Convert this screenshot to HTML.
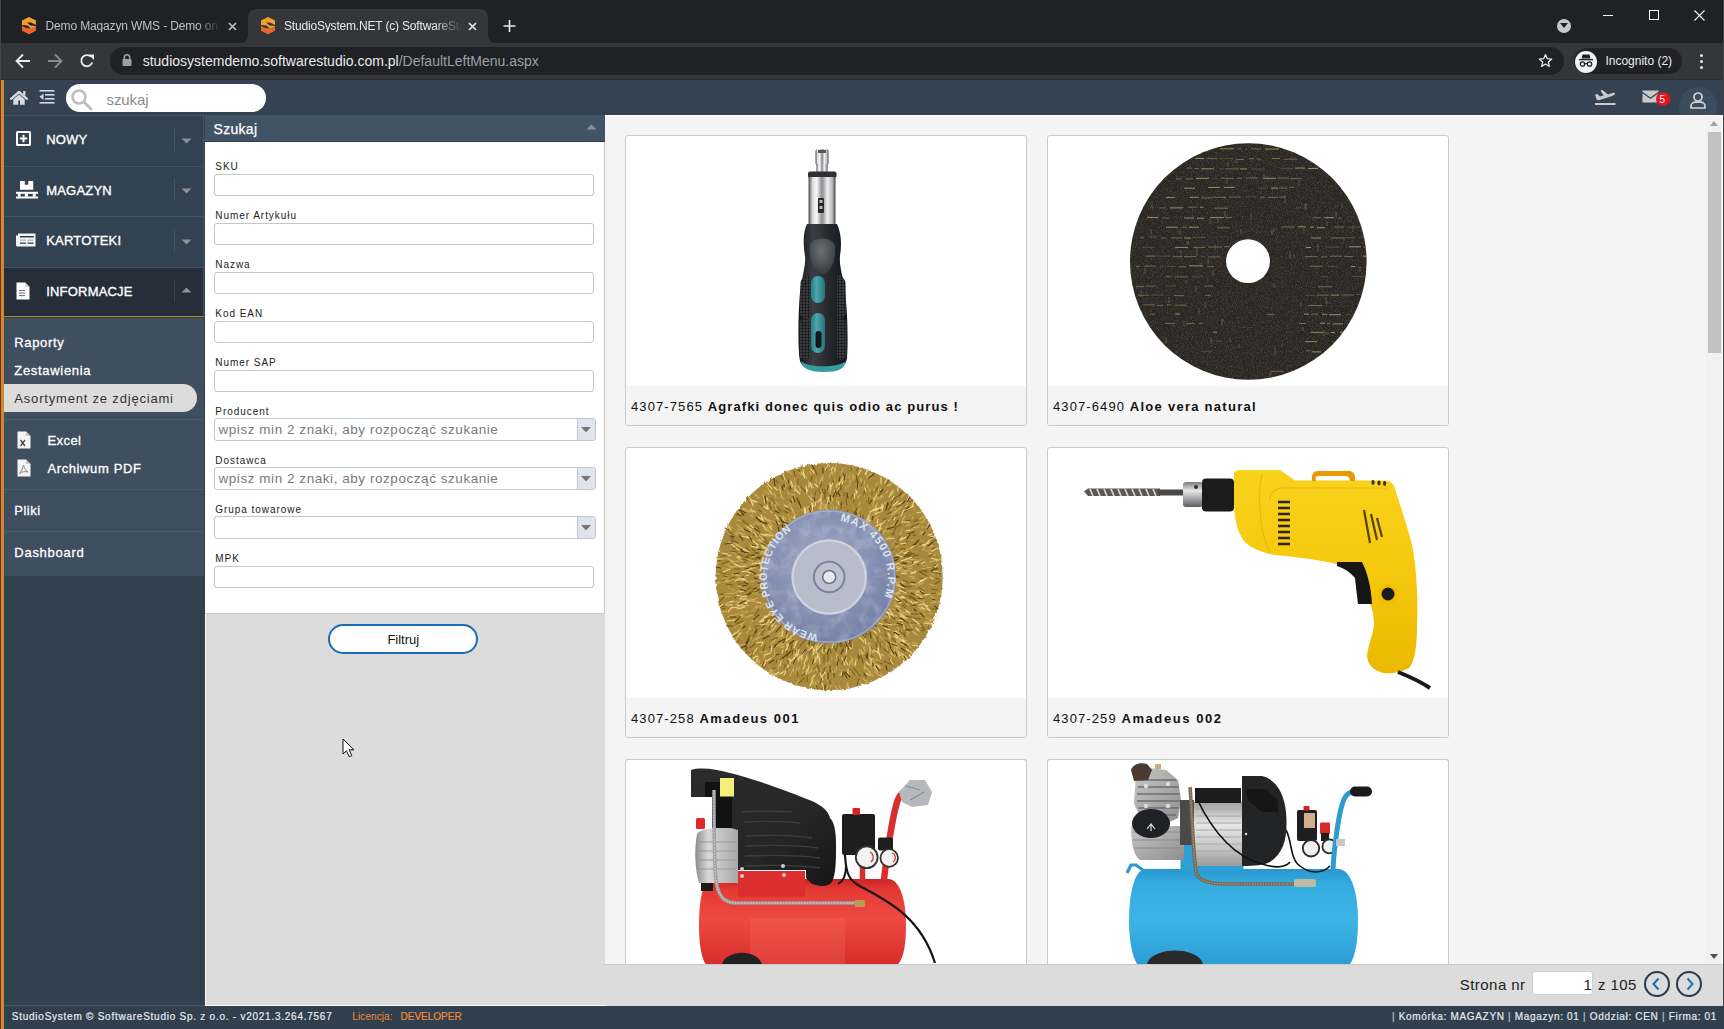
<!DOCTYPE html>
<html><head><meta charset="utf-8">
<style>
*{margin:0;padding:0;box-sizing:border-box}
html,body{width:1724px;height:1029px;overflow:hidden;background:#f3f3f3;font-family:"Liberation Sans",sans-serif}
.a{position:absolute}
.t{position:absolute;white-space:nowrap;line-height:1}
</style></head><body>
<!-- ============ CHROME TAB STRIP ============ -->
<div class="a" style="left:0;top:0;width:1724px;height:43px;background:#202124"></div>
<!-- active tab -->
<div class="a" style="left:248px;top:9px;width:240px;height:34px;background:#35363a;border-radius:8px 8px 0 0"></div>
<div class="a" style="left:240px;top:35px;width:8px;height:8px;background:#35363a"></div>
<div class="a" style="left:232px;top:27px;width:16px;height:16px;background:#202124;border-radius:0 0 8px 0"></div>
<div class="a" style="left:488px;top:35px;width:8px;height:8px;background:#35363a"></div>
<div class="a" style="left:488px;top:27px;width:16px;height:16px;background:#202124;border-radius:0 0 0 8px"></div>

<!-- favicons -->
<svg class="a" style="left:22px;top:17px" width="14" height="17" viewBox="0 0 14 17"><path d="M7 0 L14 3.5 V8 L9 5.5 H5 L8.5 8.5 L14 9 V13.5 L7 17 L0 13.5 V9 L5 11.5 H9 L5.5 8.5 L0 8 V3.5 Z" fill="#f0a030"/><path d="M0 9 L5 11.5 H9 L14 9 V13.5 L7 17 L0 13.5Z" fill="#e8642a"/></svg>
<svg class="a" style="left:261px;top:17px" width="14" height="17" viewBox="0 0 14 17"><path d="M7 0 L14 3.5 V8 L9 5.5 H5 L8.5 8.5 L14 9 V13.5 L7 17 L0 13.5 V9 L5 11.5 H9 L5.5 8.5 L0 8 V3.5 Z" fill="#f0a030"/><path d="M0 9 L5 11.5 H9 L14 9 V13.5 L7 17 L0 13.5Z" fill="#e8642a"/></svg>

<div class="t" style="left:45.5px;top:19.8px;font-size:12px;color:#bdc1c6;letter-spacing:-0.14px;width:175px;overflow:hidden;-webkit-mask-image:linear-gradient(90deg,#000 150px,transparent 175px)">Demo Magazyn WMS - Demo on</div>
<div class="t" style="left:284px;top:19.8px;font-size:12px;color:#e8eaed;letter-spacing:-0.18px;width:178px;overflow:hidden;-webkit-mask-image:linear-gradient(90deg,#000 150px,transparent 178px)">StudioSystem.NET (c) SoftwareStudio</div>
<!-- tab close x -->
<svg class="a" style="left:228px;top:22px" width="9" height="9" viewBox="0 0 9 9"><path d="M1 1L8 8M8 1L1 8" stroke="#bdc1c6" stroke-width="1.6"/></svg>
<svg class="a" style="left:467.5px;top:22px" width="9" height="9" viewBox="0 0 9 9"><path d="M1 1L8 8M8 1L1 8" stroke="#e8eaed" stroke-width="1.6"/></svg>
<!-- plus -->
<svg class="a" style="left:503px;top:20px" width="13" height="12" viewBox="0 0 13 12"><path d="M6.5 0V12M0.5 6H12.5" stroke="#e8eaed" stroke-width="1.6"/></svg>
<!-- tab search dropdown -->
<div class="a" style="left:1557px;top:19px;width:14px;height:14px;border-radius:50%;background:#c4c7cb"></div>
<svg class="a" style="left:1560px;top:23px" width="8" height="6" viewBox="0 0 8 6"><path d="M0 0H8L4 5Z" fill="#202124"/></svg>
<!-- window controls -->
<div class="a" style="left:1603px;top:15px;width:10px;height:1px;background:#fff"></div>
<div class="a" style="left:1649px;top:10px;width:10px;height:10px;border:1px solid #fff"></div>
<svg class="a" style="left:1694px;top:10px" width="11" height="11" viewBox="0 0 11 11"><path d="M0.5 0.5L10.5 10.5M10.5 0.5L0.5 10.5" stroke="#fff" stroke-width="1.1"/></svg>

<!-- ============ TOOLBAR ============ -->
<div class="a" style="left:0;top:43px;width:1724px;height:37px;background:#35363a"></div>
<div class="a" style="left:0;top:79px;width:1724px;height:1px;background:#2c2d31"></div>
<div class="a" style="left:0;top:0;width:1px;height:80px;background:#45464a"></div>
<div class="a" style="left:1723px;top:0;width:1px;height:80px;background:#45464a"></div>
<svg class="a" style="left:15px;top:53px" width="16" height="16" viewBox="0 0 16 16"><path d="M15 8H2M8 1.5L1.5 8L8 14.5" stroke="#e8eaed" stroke-width="1.8" fill="none"/></svg>
<svg class="a" style="left:47px;top:53px" width="16" height="16" viewBox="0 0 16 16"><path d="M1 8H14M8 1.5L14.5 8L8 14.5" stroke="#8a8c90" stroke-width="1.8" fill="none"/></svg>
<svg class="a" style="left:79px;top:53px" width="16" height="16" viewBox="0 0 16 16"><path d="M13.2 9.5A5.6 5.6 0 1 1 11.8 3.6" stroke="#e8eaed" stroke-width="1.8" fill="none"/><path d="M9.5 1.5H15V7Z" fill="#e8eaed"/></svg>
<!-- omnibox -->
<div class="a" style="left:110px;top:47px;width:1454px;height:28px;border-radius:14px;background:#202124"></div>
<svg class="a" style="left:122px;top:54px" width="10" height="12" viewBox="0 0 10 12"><path d="M2.3 5V3.5A2.7 2.7 0 0 1 7.7 3.5V5" stroke="#9aa0a6" stroke-width="1.5" fill="none"/><rect x="0.5" y="5" width="9" height="7" rx="1" fill="#9aa0a6"/></svg>
<div class="t" style="left:142.7px;top:54.2px;font-size:14px;color:#e8eaed">studiosystemdemo.softwarestudio.com.pl<span style="color:#9aa0a6">/DefaultLeftMenu.aspx</span></div>
<svg class="a" style="left:1538px;top:53px" width="15" height="15" viewBox="0 0 24 24"><path d="M12 2.5l2.9 6.6 7.1.6-5.4 4.7 1.6 7-6.2-3.7-6.2 3.7 1.6-7L2 9.7l7.1-.6z" stroke="#e8eaed" stroke-width="2" fill="none" stroke-linejoin="round"/></svg>
<!-- incognito -->
<div class="a" style="left:1574px;top:48px;width:108px;height:26px;border-radius:13px;background:#202124"></div>
<div class="a" style="left:1575px;top:50.5px;width:22px;height:22px;border-radius:50%;background:#f1f3f4"></div>
<svg class="a" style="left:1578px;top:53px" width="16" height="16" viewBox="0 0 16 16"><path d="M4.5 1.5h7l1 4h-9z" fill="#202124"/><rect x="1" y="6" width="14" height="1.3" fill="#202124"/><circle cx="4.5" cy="11" r="2.2" stroke="#202124" stroke-width="1.3" fill="none"/><circle cx="11.5" cy="11" r="2.2" stroke="#202124" stroke-width="1.3" fill="none"/><path d="M6.7 10.6h2.6" stroke="#202124" stroke-width="1.2"/></svg>
<div class="t" style="left:1605.4px;top:55px;font-size:12px;color:#e8eaed">Incognito (2)</div>
<div class="a" style="left:1700px;top:54px;width:3px;height:3px;border-radius:50%;background:#e8eaed"></div>
<div class="a" style="left:1700px;top:60px;width:3px;height:3px;border-radius:50%;background:#e8eaed"></div>
<div class="a" style="left:1700px;top:66px;width:3px;height:3px;border-radius:50%;background:#e8eaed"></div>

<!-- ============ APP HEADER ============ -->
<div class="a" style="left:0;top:80px;width:1724px;height:35px;background:#344251"></div>

<!-- ============ SIDEBAR ============ -->
<div class="a" style="left:0;top:115px;width:205px;height:891px;background:#33404d"></div>


<!-- header icons -->
<svg class="a" style="left:10px;top:89.5px" width="19" height="16" viewBox="0 0 19 16"><path d="M1 8.8L9 2 17 8.8" stroke="#d8dade" stroke-width="2.3" fill="none" stroke-linecap="round" stroke-linejoin="round"/><rect x="13.2" y="1" width="2.2" height="4.5" fill="#d8dade"/><path d="M3.3 9.2L9 4.4 14.7 9.2V14.7H10V10.4H8.2V14.7H3.3Z" fill="#d8dade"/></svg>
<svg class="a" style="left:39px;top:89px" width="16" height="15" viewBox="0 0 16 15"><rect x="0.5" y="1" width="15" height="1.6" fill="#d6d8dc"/><rect x="6" y="5" width="9.5" height="1.6" fill="#d6d8dc"/><rect x="6" y="9" width="9.5" height="1.6" fill="#d6d8dc"/><rect x="0.5" y="13" width="15" height="1.6" fill="#d6d8dc"/><path d="M0.5 7.8L4.5 4.5V11Z" fill="#d6d8dc"/></svg>
<div class="a" style="left:66px;top:84px;width:200px;height:28px;border-radius:14px;background:#fff"></div>
<svg class="a" style="left:70px;top:88px" width="23" height="23" viewBox="0 0 23 23"><circle cx="9" cy="9" r="6.5" stroke="#bdbdbd" stroke-width="2.6" fill="none"/><path d="M13.8 13.8L21 21" stroke="#bdbdbd" stroke-width="3" stroke-linecap="round"/></svg>
<div class="t" style="left:106.5px;top:91.5px;font-size:15px;color:#8a8a8a;letter-spacing:-0.1px">szukaj</div>
<!-- plane -->
<svg class="a" style="left:1594px;top:89px" width="22" height="17" viewBox="0 0 22 17"><path d="M1 5.5L3.5 5 6 7.5 9.5 6.5 6.5 1.5 8.5 1 14 5.5 18.5 4C20.5 3.5 21.5 4 21 5S19 6.8 17.5 7.3L5.5 11C4 11.4 3 11 2.5 10.2Z" fill="#c8cacd"/><rect x="1" y="14" width="20.5" height="2" fill="#c8cacd"/></svg>
<!-- mail -->
<svg class="a" style="left:1642px;top:90px" width="17" height="13" viewBox="0 0 17 13"><path d="M0.5 0.5H16.5V1.8L8.5 7.5 0.5 1.8Z" fill="#c8cacd"/><path d="M0.5 3.2L8.5 9 16.5 3.2V12.5H0.5Z" fill="#c8cacd"/></svg>
<div class="a" style="left:1656px;top:92px;width:14px;height:14px;border-radius:50%;background:#e8141c"></div>
<div class="t" style="left:1659.5px;top:94.5px;font-size:10px;color:#fff">5</div>
<!-- user -->
<div class="a" style="left:1679px;top:87px;width:38px;height:38px;border-radius:50%;background:#3d4c5c;clip-path:inset(0 0 10px 0)"></div>
<svg class="a" style="left:1690px;top:92px" width="16" height="17" viewBox="0 0 16 17"><circle cx="8" cy="5" r="4" stroke="#d0d2d5" stroke-width="1.7" fill="none"/><path d="M1 16V14.2C1 11.8 3 10.2 5.5 10.2H10.5C13 10.2 15 11.8 15 14.2V16Z" stroke="#d0d2d5" stroke-width="1.7" fill="none" stroke-linejoin="round"/></svg>
<div class="a" style="left:1723px;top:80px;width:1px;height:949px;background:#3c3f44"></div>

<!-- ============ SIDEBAR items ============ -->
<div class="a" style="left:4px;top:115px;width:200px;height:202px;background:#334250"></div>
<div class="a" style="left:4px;top:115px;width:200px;height:1px;background:#445361"></div>
<div class="a" style="left:4px;top:166px;width:200px;height:1px;background:#445361"></div>
<div class="a" style="left:4px;top:216px;width:200px;height:1px;background:#445361"></div>
<div class="a" style="left:4px;top:267px;width:200px;height:1px;background:#445361"></div>
<div class="a" style="left:203px;top:115px;width:1px;height:202px;background:#445361"></div>
<div class="a" style="left:4px;top:268px;width:199px;height:48px;background:#262f39"></div>
<div class="a" style="left:4px;top:316px;width:200px;height:1px;background:#c8802c"></div>
<!-- dividers + triangles -->
<div class="a" style="left:174px;top:128px;width:1px;height:23px;background:#465563"></div>
<div class="a" style="left:174px;top:178px;width:1px;height:23px;background:#465563"></div>
<div class="a" style="left:174px;top:229px;width:1px;height:23px;background:#465563"></div>
<div class="a" style="left:174px;top:279px;width:1px;height:23px;background:#3a4450"></div>
<svg class="a" style="left:181px;top:138px" width="11" height="6" viewBox="0 0 11 6"><path d="M0.5 0.5H10.5L5.5 5.5Z" fill="#8e9092"/></svg>
<svg class="a" style="left:181px;top:188px" width="11" height="6" viewBox="0 0 11 6"><path d="M0.5 0.5H10.5L5.5 5.5Z" fill="#8e9092"/></svg>
<svg class="a" style="left:181px;top:239px" width="11" height="6" viewBox="0 0 11 6"><path d="M0.5 0.5H10.5L5.5 5.5Z" fill="#8e9092"/></svg>
<svg class="a" style="left:181px;top:287px" width="11" height="6" viewBox="0 0 11 6"><path d="M0.5 5.5H10.5L5.5 0.5Z" fill="#8e9092"/></svg>
<!-- icons -->
<svg class="a" style="left:16px;top:131px" width="15" height="15" viewBox="0 0 15 15"><rect x="1" y="1" width="13" height="13" stroke="#fff" stroke-width="2" fill="none" rx="0.5"/><path d="M7.5 3.8V11.2M3.8 7.5H11.2" stroke="#fff" stroke-width="2"/></svg>
<svg class="a" style="left:16px;top:180px" width="22" height="19" viewBox="0 0 22 19"><path d="M4 1H8.8V4.7H12.3V1H17.2V9.8H4Z" fill="#fff"/><rect x="0" y="11.8" width="22" height="2" fill="#fff"/><rect x="0" y="16.5" width="22" height="2" fill="#fff"/><rect x="1.8" y="13.5" width="2.8" height="3.2" fill="#fff"/><rect x="8.8" y="13.5" width="3.2" height="3.2" fill="#fff"/><rect x="16.8" y="13.5" width="2.9" height="3.2" fill="#fff"/></svg>
<svg class="a" style="left:16px;top:233px" width="20" height="14" viewBox="0 0 20 14"><path d="M1 0.5H19.5V13.5H1.5C0.7 13.5 0 12.8 0 12V2.5H2V0.5Z" fill="#f4f4f4"/><rect x="4" y="3" width="14" height="1.5" fill="#334250"/><rect x="4" y="6.5" width="6" height="1.3" fill="#b0b4b8"/><rect x="11.5" y="6.5" width="6" height="1.3" fill="#b0b4b8"/><rect x="4" y="9.5" width="6" height="1.3" fill="#334250"/><rect x="11.5" y="9.5" width="6" height="1.3" fill="#334250"/></svg>
<svg class="a" style="left:16px;top:282px" width="14" height="18" viewBox="0 0 14 18"><path d="M0.5 0.5H9L13.5 5V17.5H0.5Z" fill="#fff"/><path d="M9 0.5V5H13.5" fill="#d8d8d8"/><rect x="3" y="8" width="6" height="1.1" fill="#777"/><rect x="3" y="10.5" width="6" height="1.1" fill="#777"/><rect x="3" y="13" width="6" height="1.1" fill="#777"/></svg>
<div class="t" style="left:46.2px;top:133.0px;font-size:13px;color:#fff;letter-spacing:0.2px;-webkit-text-stroke:0.35px #fff">NOWY</div>
<div class="t" style="left:46.2px;top:183.5px;font-size:13px;color:#fff;letter-spacing:0.2px;-webkit-text-stroke:0.35px #fff">MAGAZYN</div>
<div class="t" style="left:46.2px;top:234.0px;font-size:13px;color:#fff;letter-spacing:0.2px;-webkit-text-stroke:0.35px #fff">KARTOTEKI</div>
<div class="t" style="left:46.2px;top:285.0px;font-size:13px;color:#fff;letter-spacing:0.2px;-webkit-text-stroke:0.35px #fff">INFORMACJE</div>
<!-- submenu -->
<div class="a" style="left:4px;top:317.5px;width:200px;height:258px;background:#3f4f60"></div>
<div class="a" style="left:4px;top:384px;width:193px;height:28px;background:#dcdcdc;border-radius:0 14px 14px 0"></div>
<div class="a" style="left:4px;top:419px;width:200px;height:1px;background:#4d5c6c"></div>
<div class="a" style="left:4px;top:489px;width:200px;height:1px;background:#4d5c6c"></div>
<div class="a" style="left:4px;top:531px;width:200px;height:1px;background:#4d5c6c"></div>
<div class="t" style="left:14.3px;top:336px;font-size:13px;color:#fff;letter-spacing:0.65px;-webkit-text-stroke:0.3px #fff">Raporty</div>
<div class="t" style="left:14.3px;top:364px;font-size:13px;color:#fff;letter-spacing:0.69px;-webkit-text-stroke:0.3px #fff">Zestawienia</div>
<div class="t" style="left:14.3px;top:392px;font-size:13px;color:#333;letter-spacing:0.81px">Asortyment ze zdjęciami</div>
<div class="t" style="left:47.4px;top:434px;font-size:13px;color:#fff;letter-spacing:0.45px;-webkit-text-stroke:0.3px #fff">Excel</div>
<div class="t" style="left:47.4px;top:462.2px;font-size:13px;color:#fff;letter-spacing:0.62px;-webkit-text-stroke:0.3px #fff">Archiwum PDF</div>
<div class="t" style="left:14.3px;top:504px;font-size:13px;color:#fff;letter-spacing:0.5px;-webkit-text-stroke:0.3px #fff">Pliki</div>
<div class="t" style="left:14.3px;top:546.1px;font-size:13px;color:#fff;letter-spacing:0.73px;-webkit-text-stroke:0.3px #fff">Dashboard</div>
<svg class="a" style="left:17px;top:431px" width="14" height="18" viewBox="0 0 14 18"><path d="M0.5 0.5H9L13.5 5V17.5H0.5Z" fill="#f4f4f4"/><path d="M9 0.5V5H13.5Z" fill="#c8c8c8"/><path d="M3.5 9L8 15M8 9L3.5 15" stroke="#444" stroke-width="1.3"/></svg>
<svg class="a" style="left:17px;top:459px" width="14" height="18" viewBox="0 0 14 18"><path d="M0.5 0.5H9L13.5 5V17.5H0.5Z" fill="#f4f4f4"/><path d="M9 0.5V5H13.5Z" fill="#c8c8c8"/><path d="M6.5 6C5.5 9 4.5 12 2.5 14.5M6.5 6C7.5 9.5 9 12 11 13M2.5 14.5C5 12.5 8 12.2 11 13" stroke="#888" stroke-width="1" fill="none"/></svg>
<div class="a" style="left:4px;top:1005px;width:201px;height:1px;background:#4a5866"></div>


<!-- ============ PANEL ============ -->
<div class="a" style="left:205px;top:115px;width:400px;height:891px;background:#dcdcdc;border-left:1px solid #fff;border-bottom:1px solid #fff"></div>
<div class="a" style="left:205px;top:115px;width:400px;height:27px;background:#435366;border-bottom:1px solid #2f3c4a"></div>
<div class="t" style="left:213.5px;top:121.5px;font-size:14px;color:#fff;letter-spacing:0.3px;-webkit-text-stroke:0.25px #fff">Szukaj</div>
<svg class="a" style="left:586px;top:124px" width="11" height="6" viewBox="0 0 11 6"><path d="M0.5 5.5H10.5L5.5 0.5Z" fill="#8e9092"/></svg>
<div class="a" style="left:205px;top:142px;width:400px;height:472px;background:#fff;border-right:1px solid #c8c8c8;border-bottom:1px solid #c8c8c8"></div>
<div class="t" style="left:215.3px;top:162.0px;font-size:10px;color:#222;letter-spacing:0.95px">SKU</div>
<div class="a" style="left:214px;top:173.5px;width:380px;height:22px;border:1px solid #c3c6cb;border-radius:3px;background:#fff"></div>
<div class="t" style="left:215.3px;top:211.0px;font-size:10px;color:#222;letter-spacing:0.95px">Numer Artykułu</div>
<div class="a" style="left:214px;top:222.5px;width:380px;height:22px;border:1px solid #c3c6cb;border-radius:3px;background:#fff"></div>
<div class="t" style="left:215.3px;top:260.0px;font-size:10px;color:#222;letter-spacing:0.95px">Nazwa</div>
<div class="a" style="left:214px;top:271.5px;width:380px;height:22px;border:1px solid #c3c6cb;border-radius:3px;background:#fff"></div>
<div class="t" style="left:215.3px;top:309.0px;font-size:10px;color:#222;letter-spacing:0.95px">Kod EAN</div>
<div class="a" style="left:214px;top:320.5px;width:380px;height:22px;border:1px solid #c3c6cb;border-radius:3px;background:#fff"></div>
<div class="t" style="left:215.3px;top:358.0px;font-size:10px;color:#222;letter-spacing:0.95px">Numer SAP</div>
<div class="a" style="left:214px;top:369.5px;width:380px;height:22px;border:1px solid #c3c6cb;border-radius:3px;background:#fff"></div>
<div class="t" style="left:215.3px;top:407.0px;font-size:10px;color:#222;letter-spacing:0.95px">Producent</div>
<div class="a" style="left:214px;top:418.0px;width:382px;height:23px;border:1px solid #c3c6cb;border-radius:3px;background:#fff;overflow:hidden"><div class="a" style="right:0;top:0;width:18px;height:21px;background:#dfe5ef;border-left:1px solid #c3c6cb"></div><svg class="a" style="right:4px;top:8px" width="10" height="6" viewBox="0 0 10 6"><path d="M0 0H10L5 5.5Z" fill="#777"/></svg></div>
<div class="t" style="left:218.5px;top:422.9px;font-size:13.5px;color:#7a7a7a;letter-spacing:0.55px">wpisz min 2 znaki, aby rozpocząć szukanie</div>
<div class="t" style="left:215.3px;top:456.0px;font-size:10px;color:#222;letter-spacing:0.95px">Dostawca</div>
<div class="a" style="left:214px;top:467.0px;width:382px;height:23px;border:1px solid #c3c6cb;border-radius:3px;background:#fff;overflow:hidden"><div class="a" style="right:0;top:0;width:18px;height:21px;background:#dfe5ef;border-left:1px solid #c3c6cb"></div><svg class="a" style="right:4px;top:8px" width="10" height="6" viewBox="0 0 10 6"><path d="M0 0H10L5 5.5Z" fill="#777"/></svg></div>
<div class="t" style="left:218.5px;top:471.9px;font-size:13.5px;color:#7a7a7a;letter-spacing:0.55px">wpisz min 2 znaki, aby rozpocząć szukanie</div>
<div class="t" style="left:215.3px;top:505.0px;font-size:10px;color:#222;letter-spacing:0.95px">Grupa towarowe</div>
<div class="a" style="left:214px;top:516.0px;width:382px;height:23px;border:1px solid #c3c6cb;border-radius:3px;background:#fff;overflow:hidden"><div class="a" style="right:0;top:0;width:18px;height:21px;background:#dfe5ef;border-left:1px solid #c3c6cb"></div><svg class="a" style="right:4px;top:8px" width="10" height="6" viewBox="0 0 10 6"><path d="M0 0H10L5 5.5Z" fill="#777"/></svg></div>
<div class="t" style="left:215.3px;top:554.0px;font-size:10px;color:#222;letter-spacing:0.95px">MPK</div>
<div class="a" style="left:214px;top:565.5px;width:380px;height:22px;border:1px solid #c3c6cb;border-radius:3px;background:#fff"></div>

<div class="a" style="left:328px;top:624px;width:150px;height:30px;border:2px solid #1a6db4;border-radius:15px;background:#fff"></div>
<div class="t" style="left:387.4px;top:633px;font-size:13px;color:#111">Filtruj</div>
<svg class="a" style="left:342px;top:738px" width="14" height="20" viewBox="0 0 14 20"><path d="M1 1V16L4.5 12.8 7.3 18.8 9.8 17.6 7.1 11.8H12Z" fill="#fff" stroke="#111" stroke-width="1" stroke-linejoin="round"/></svg>

<!-- ============ CONTENT AREA ============ -->
<div class="a" style="left:605px;top:115px;width:1118px;height:849px;background:#f4f4f4;border-top:1px solid #fff"></div>
<div class="a" style="left:1705px;top:116px;width:17px;height:848px;background:#f1f1f1"></div>
<div class="a" style="left:1708px;top:132px;width:13px;height:221px;background:#c1c1c1"></div>
<svg class="a" style="left:1710px;top:121px" width="8" height="5" viewBox="0 0 8 5"><path d="M0 5H8L4 0Z" fill="#a3a3a3"/></svg>
<svg class="a" style="left:1710px;top:954px" width="8" height="5" viewBox="0 0 8 5"><path d="M0 0H8L4 5Z" fill="#505050"/></svg>
<div class="a" style="left:1722px;top:115px;width:1px;height:849px;background:#fff"></div>

<!-- cards -->
<div class="a" style="left:625px;top:135px;width:402px;height:291px;background:#fff;border:1px solid #c9c9c9;border-radius:3px;overflow:hidden"><div class="a" style="left:0;top:250px;width:400px;height:40px;background:#f4f4f4"></div></div>
<svg class="a" style="left:625px;top:135px" width="402" height="291" viewBox="625 135 402 291">
<defs>
<linearGradient id="chr" x1="0" x2="1"><stop offset="0" stop-color="#4a4c50"/><stop offset="0.15" stop-color="#d8d8da"/><stop offset="0.3" stop-color="#fafafa"/><stop offset="0.5" stop-color="#8a8c90"/><stop offset="0.7" stop-color="#f0f0f0"/><stop offset="0.88" stop-color="#b8babc"/><stop offset="1" stop-color="#404246"/></linearGradient>
<linearGradient id="hdl" x1="0" x2="1"><stop offset="0" stop-color="#141618"/><stop offset="0.3" stop-color="#3a3e42"/><stop offset="0.55" stop-color="#2a2d30"/><stop offset="1" stop-color="#111315"/></linearGradient>
<radialGradient id="dome" cx="0.45" cy="0.35" r="0.6"><stop offset="0" stop-color="#6a7074"/><stop offset="1" stop-color="#3c4044"/></radialGradient>
<pattern id="dots" width="3" height="3" patternUnits="userSpaceOnUse"><rect width="3" height="3" fill="#3a3d40"/><circle cx="1.5" cy="1.5" r="1" fill="#0a0b0c"/></pattern>
<linearGradient id="teal" x1="0" x2="1"><stop offset="0" stop-color="#2c7c84"/><stop offset="0.4" stop-color="#4aa8b0"/><stop offset="1" stop-color="#2a7078"/></linearGradient>
</defs>
<rect x="815.5" y="149" width="13" height="16" rx="2" fill="url(#chr)"/>
<rect x="818" y="150" width="8" height="3" fill="#555"/>
<rect x="816.5" y="164" width="11" height="9" fill="url(#chr)"/>
<rect x="808" y="171.5" width="28.5" height="6.5" rx="2" fill="#2e3033"/>
<rect x="808.5" y="177" width="27" height="48" fill="url(#chr)"/>
<rect x="818" y="198" width="6" height="15" rx="1" fill="#2a2a2a"/>
<rect x="819.5" y="200" width="3" height="3" fill="#bbb"/><rect x="819.5" y="206" width="3" height="3" fill="#bbb"/>
<path d="M807 224 H837 C841 232 842 244 840 256 C839 266 843 276 845 292 C848 315 848 345 847 358 C846 367 838 371 823 371 C808 371 800 367 799.5 358 C798 345 798 315 800 292 C802 276 806 266 805 256 C803 244 803 232 807 224Z" fill="url(#hdl)"/>
<path d="M810 246 C810 236 834 236 835 246 C836 260 832 272 822.5 274 C813 272 809 260 810 246Z" fill="url(#dome)"/>
<path d="M800.5 282 C803 276 806 274 809 276 V318 C806 320 802 318 800 314Z" fill="url(#dots)"/>
<path d="M845.5 282 C843 276 840 274 837 276 V318 C840 320 844 318 846 314Z" fill="url(#dots)"/>
<path d="M799.5 322 C802 318 806 318 809 320 V358 C806 361 801 360 799.5 356Z" fill="url(#dots)"/>
<path d="M846.5 322 C844 318 840 318 837 320 V358 C840 361 845 360 846.5 356Z" fill="url(#dots)"/>
<rect x="811" y="276" width="14" height="27" rx="7" fill="url(#teal)"/>
<rect x="811" y="313" width="14" height="40" rx="7" fill="url(#teal)"/>
<rect x="815.5" y="331" width="6" height="17" rx="3" fill="#15171a"/>
<path d="M801 361 C808 368 838 368 846 361 C845 369 838 372 823 372 C809 372 802 368 801 361Z" fill="#3a9aa2"/>
</svg>
<div class="t" style="left:631px;top:399.8px;font-size:13px;color:#111;letter-spacing:1.1px">4307-7565 <b style="letter-spacing:1.1px">Agrafki donec quis odio ac purus !</b></div>
<div class="a" style="left:1047px;top:135px;width:402px;height:291px;background:#fff;border:1px solid #c9c9c9;border-radius:3px;overflow:hidden"><div class="a" style="left:0;top:250px;width:400px;height:40px;background:#f4f4f4"></div></div>
<svg class="a" style="left:1047px;top:135px" width="402" height="291" viewBox="1047 135 402 291">
<defs>
<filter id="grain" x="0" y="0" width="100%" height="100%"><feTurbulence type="fractalNoise" baseFrequency="1.2" numOctaves="1" seed="4" result="t"/><feColorMatrix in="t" type="matrix" values="0 0 0 0 0.45  0 0 0 0 0.42  0 0 0 0 0.38  0 0 0 1.6 -0.75"/><feComposite in2="SourceGraphic" operator="in"/></filter>
<clipPath id="dc"><circle cx="1248.3" cy="261.5" r="118.3"/></clipPath>
</defs>
<circle cx="1248.3" cy="261.5" r="118.3" fill="#2a2723"/>
<g clip-path="url(#dc)">
<circle cx="1248.3" cy="261.5" r="118.3" fill="#fff" filter="url(#grain)" opacity="0.5"/>
<path d="M1238 148.9h3M1251 148.9h10M1207 158.7h10M1237 159.5h7M1249 158.7h5M1257 159.1h4M1272 158.5h8M1284 159.2h13M1187 168.1h5M1194 168.5h5M1225 168.9h14M1176 179.0h5M1186 178.9h7M1221 178.3h13M1237 178.3h5M1246 178.0h12M1277 178.0h12M1290 178.7h12M1279 188.1h8M1289 187.3h5M1201 197.9h11M1213 197.3h13M1229 197.0h12M1260 197.2h5M1268 197.4h10M1279 197.2h6M1159 207.9h7M1188 207.2h9M1214 208.2h14M1162 218.1h7M1225 217.4h7M1313 217.7h8M1338 218.2h3M1182 227.2h5M1217 227.8h13M1281 227.0h13M1334 227.0h10M1140 237.7h4M1161 237.9h5M1171 237.9h11M1331 237.9h13M1193 247.4h12M1208 247.0h14M1224 246.7h6M1363 247.1h14M1146 256.1h10M1173 256.7h9M1184 256.6h12M1208 256.9h12M1305 256.6h12M1321 256.9h6M1330 256.2h12M1344 256.6h9M1136 266.4h4M1144 266.1h12M1179 266.8h7M1207 266.4h7M1310 266.2h13M1165 276.3h5M1174 276.9h14M1136 286.6h8M1147 286.0h9M1204 286.1h9M1318 286.8h14M1138 295.2h11M1174 295.6h10M1205 295.3h6M1317 295.1h12M1341 295.0h13M1143 304.8h12M1157 305.4h6M1167 304.9h4M1175 305.2h11M1308 305.5h14M1150 314.2h5M1267 314.4h7M1311 314.1h7M1165 323.4h10M1186 323.4h9M1199 323.6h4M1299 323.5h7M1327 323.5h3M1306 350.8h4M1271 371.3h13" stroke="#8c6e4a" stroke-width="0.85" fill="none"/>
<path d="M1220 148.8h14M1265 149.0h14M1195 158.5h9M1201 168.8h13M1240 168.9h7M1295 168.1h10M1308 168.5h10M1196 178.3h13M1263 178.3h13M1184 188.2h11M1208 187.4h12M1224 187.4h11M1271 188.1h7M1166 197.4h9M1190 197.3h9M1170 207.9h13M1200 207.2h3M1147 217.4h11M1184 218.0h10M1197 218.2h7M1210 217.6h14M1324 217.7h10M1166 227.2h12M1189 227.2h10M1298 226.8h8M1310 227.1h4M1317 227.7h8M1184 238.1h7M1311 238.0h10M1175 247.4h13M1306 247.5h5M1349 246.8h12M1363 256.2h7M1189 265.9h14M1351 266.6h4M1331 295.1h8M1175 314.1h5M1304 314.1h5M1322 314.3h5M1329 314.7h12M1320 323.2h5M1333 323.9h10M1213 332.2h4M1311 332.3h12M1331 332.5h4M1340 332.2h13M1305 341.6h12M1312 351.9h9" stroke="#b8966a" stroke-width="0.85" fill="none"/>
<path d="M1245 149.2h3M1219 158.6h14M1219 168.9h5M1252 169.1h13M1280 168.7h13M1214 178.8h4M1258 188.2h9M1246 196.8h10M1150 207.2h4M1296 208.0h5M1348 227.1h12M1149 237.1h8M1193 237.4h13M1345 237.7h10M1358 237.8h11M1143 247.3h11M1326 247.1h13M1157 256.1h13M1201 256.5h4M1160 266.4h4M1167 266.4h9M1328 266.3h9M1192 276.1h11M1321 276.7h7M1352 276.4h13M1166 286.0h10M1151 295.1h12M1305 295.3h10M1356 294.5h8M1346 314.7h5M1325 333.2h5M1216 341.1h5M1332 341.7h13M1201 351.3h11" stroke="#64503a" stroke-width="0.85" fill="none"/>
<path d="M1210 218v6M1196 286v6M1294 254v4M1274 228v4M1304 228v5M1227 178v6M1230 337v5M1353 225v7M1186 280v4M1336 211v7M1290 251v8M1222 319v6M1236 158v5M1197 248v8M1199 308v6M1188 241v4M1342 203v5M1211 337v7M1151 229v5M1301 302v5M1241 229v5M1205 302v6M1326 297v7M1285 195v8M1180 231v4M1223 319v3M1169 297v6M1306 203v7M1303 327v4M1213 270v6M1201 263v4M1264 174v3M1251 213v7M1188 241v3M1181 250v6M1239 344v4M1360 267v5M1275 348v8M1166 337v7M1299 180v6M1282 344v3M1228 162v4M1208 259v6M1344 237v4M1305 204v5M1215 245v5M1145 268v6M1225 196v3M1218 218v5M1184 321v5M1270 371v5M1272 230v5M1274 283v5M1152 203v4M1318 244v7M1225 211v6M1327 221v5M1324 330v6M1141 291v6" stroke="#8a6c48" stroke-width="0.9" fill="none" opacity="0.7"/>

</g>
<circle cx="1248" cy="261.2" r="21.9" fill="#fff"/>
</svg>
<div class="t" style="left:1053px;top:399.8px;font-size:13px;color:#111;letter-spacing:1.1px">4307-6490 <b style="letter-spacing:1.27px">Aloe vera natural</b></div>
<div class="a" style="left:625px;top:447px;width:402px;height:291px;background:#fff;border:1px solid #c9c9c9;border-radius:3px;overflow:hidden"><div class="a" style="left:0;top:250px;width:400px;height:40px;background:#f4f4f4"></div></div>
<svg class="a" style="left:625px;top:447px" width="402" height="291" viewBox="625 447 402 291">
<defs>
<radialGradient id="stl" cx="0.45" cy="0.4" r="0.6"><stop offset="0" stop-color="#a0a8c4"/><stop offset="1" stop-color="#7480a6"/></radialGradient>
<filter id="wire" x="-5%" y="-5%" width="110%" height="110%"><feTurbulence type="fractalNoise" baseFrequency="0.3" numOctaves="2" seed="7" result="n"/><feDisplacementMap in="SourceGraphic" in2="n" scale="3"/></filter>
</defs>
<circle cx="829.2" cy="576.6" r="113.5" fill="#a8893e" filter="url(#wire)"/>
<path d="M830 495l-0 -5M784 499l-3 -2M734 580l-5 -1M908 567l6 -3M934 561l5 -1M831 508l2 -4M801 491l-3 -5M844 648l0 6M901 630l1 3M876 528l2 -6M743 529l-7 1M859 472l1 -5M751 564l-6 -1M846 499l2 -4M754 566l-7 2M764 560l-7 0M780 622l-3 7M890 652l7 4M781 627l-4 1M861 650l2 3M723 559l-3 1M793 669l-3 7M740 600l-7 2M897 599l3 2M759 592l-3 1M747 555l-3 -3M906 569l4 1M768 541l-7 -2M748 569l-3 -0M921 568l4 1M844 482l-0 -6M865 663l-1 6M827 501l0 -4M918 547l5 -2M829 665l-0 8M836 510l1 -4M930 547l2 -2M896 584l5 0M928 547l5 -1M746 572l-4 -2M754 599l-6 2M776 498l-2 -5M815 666l-1 6M773 629l-4 3M898 546l2 -3M903 571l4 0M842 673l-0 3M877 502l1 -6M763 664l-4 2M881 615l6 2M781 493l-2 -4M755 546l-5 -0M825 641l-1 4M907 644l4 4M742 561l-6 -4M909 502l4 -2M831 685l0 5M900 583l5 1M785 529l-2 -3M833 510l1 -3M795 639l-5 3M742 576l-7 -1M865 667l-0 3M836 480l1 -3M896 593l4 -1M764 587l-5 3M801 475l-2 -3M829 477l3 -6M897 650l2 3M905 570l5 1M872 517l2 -5M811 475l-2 -7M744 535l-8 1M879 513l3 -2M893 643l6 4M772 513l-2 -2M759 525l-6 -1M755 517l-4 -7M908 600l3 2M807 654l0 7M777 536l-7 -3M925 624l6 4M886 645l2 8M875 509l2 -6M882 624l2 6M757 589l-4 1M821 512l1 -6M914 585l6 -1M890 510l3 -2M765 553l-3 -1M777 509l-3 -6M738 534l-7 0M741 596l-4 -1M886 493l2 -2M825 672l1 3M777 625l-7 1M833 475l-2 -7M870 629l4 3M903 617l5 6M873 507l0 -4M836 502l3 -6M859 649l1 7M753 601l-5 -0M881 673l1 4M802 656l-4 6M912 514l2 -5M897 609l6 2M758 546l-3 -2M748 581l-4 2M809 643l-1 3M888 521l4 -3M753 653l-3 2M819 643l-3 6M910 541l3 -1M772 505l-0 -5M732 593l-7 1M736 562l-4 -1M916 621l5 5M879 617l5 2M781 640l-3 2M927 551l8 -2M769 624l-3 6M771 669l-2 3M825 650l-1 4M827 678l-0 3M745 579l-3 -1M830 467l-2 -4M917 605l4 5M762 523l-2 -3M880 636l2 3M922 611l3 4M913 551l4 -1M754 541l-3 -1M749 510l-6 -2M878 500l4 -5M878 525l2 -2M891 526l6 -4M739 545l-5 -2M889 636l2 7M893 615l4 1M805 496l-2 -7M749 571l-3 -2M812 507l2 -5M923 546l3 1M925 610l4 -1M726 580l-3 1M885 504l6 -5M774 672l-2 4M910 624l4 -0M736 554l-6 -4M842 509l1 -4M896 643l4 6M750 564l-4 -2M742 587l-4 -1M881 654l3 2M934 593l8 -0M820 483l1 -3M858 489l-0 -6M758 552l-3 -2M761 519l-5 -4M797 667l-1 7M817 640l2 7M917 541l7 0M806 668l0 4M814 488l-4 -6M742 548l-7 -4M775 649l-1 4M872 514l6 -5M821 506l-1 -5M880 499l3 -3M768 521l-6 -5M733 579l-6 3M864 647l3 3M916 591l7 -2M820 510l-1 -4M848 491l0 -6M873 659l1 5M810 643l-2 7M846 490l0 -4M852 660l1 5M751 637l-2 2M868 642l3 2M856 672l2 2M764 500l-1 -6M876 659l4 3M766 651l-3 5M852 481l4 -6M813 660l-2 4M748 528l-3 -3M820 669l1 3M934 593l4 2M769 509l-4 -2M926 610l5 -0M906 614l8 1M766 513l-4 -2M779 637l-1 3M793 666l1 6M769 521l-5 -4M913 510l3 -0M923 550l3 -3M824 667l2 4M892 602l4 5M899 600l5 3M895 619l5 2M854 671l3 4M763 539l-4 -4M757 598l-4 2M771 546l-4 -1M878 494l1 -7M894 584l5 0M788 633l-2 7M876 668l2 3M937 561l5 -3M835 686l3 4M926 551l7 -0M938 578l5 -0M738 637l-4 1M824 509l-0 -5M773 669l-3 6M819 649l1 6M917 544l5 -3M908 591l8 0M781 491l-2 -4M735 619l-2 2M735 564l-6 -4M728 581l-3 1M874 492l0 -4M820 680l-4 5M809 484l-1 -3M786 519l-4 -3M921 527l3 0M881 621l3 4M901 655l3 4M780 673l-4 3M839 686l3 4M824 492l2 -4M835 482l-1 -4M824 497l-3 -7M890 554l4 -3M804 650l-4 7M774 641l-3 3M901 614l2 2M894 532l4 -2M816 500l-5 -6M873 489l5 -6M873 635l3 6M758 563l-7 -2M765 552l-3 -3M738 619l-4 2M782 635l-3 5M894 646l1 7M781 642l-4 5M797 486l-5 -6M895 548l3 -2M856 672l1 3M841 480l2 -5M723 597l-5 -2M869 664l3 5M921 518l4 -2M838 661l1 5M744 556l-6 -0M913 602l4 0M757 513l-6 -5M895 593l4 -1M865 488l0 -7M875 506l2 -2M814 682l-2 3M877 645l2 3M759 660l-3 4M824 645l2 6M890 653l5 4M815 665l2 6M775 522l-6 -2M764 544l-7 -4M895 586l6 4M920 532l4 0M796 642l-2 4M868 642l2 5M730 534l-5 -3M885 624l1 4M753 621l-3 1M796 648l-3 7M784 636l-3 2M816 679l-1 8M758 588l-7 4M792 474l-4 -3M930 562l6 -2M835 671l-2 6M899 554l5 -5M807 513l1 -7M746 598l-3 2M812 664l0 4M925 621l5 2M893 570l6 -4M808 675l0 4M917 521l6 -4M782 497l-2 -5M734 590l-6 -2M926 528l5 -0M729 577l-7 2M901 497l4 -3M836 654l3 4M904 640l3 1M740 576l-7 -1M758 595l-5 -2M900 535l3 -6M868 488l-1 -4M732 615l-4 2M891 643l3 1M741 528l-6 -5M758 605l-5 6M868 524l2 -3M780 620l-2 6M906 634l3 3M756 544l-8 -0M875 528l4 -4M872 652l3 1M766 553l-7 -3M868 517l6 -4M916 523l8 -1M736 632l-3 5M920 606l5 2M772 539l-3 -3M729 579l-7 3M910 515l4 -0M908 562l8 1M771 532l-3 -3M791 628l-2 4M897 624l1 3M784 626l-3 7M875 649l2 4M746 605l-5 4M744 531l-4 -4M792 488l-2 -6M786 670l-3 2M744 611l-4 1M808 513l1 -6M840 669l1 4M917 629l4 1M842 675l-2 7M849 478l2 -7M789 495l-1 -5M823 660l-0 6M875 515l2 -8M828 661l-3 6M895 637l6 4M760 497l-5 -2M903 608l6 4M768 531l-3 -2M730 602l-4 2M756 638l-4 5M865 521l4 -2M891 656l1 8M832 504l0 -5M748 605l-6 0M852 658l3 6M841 672l-2 4M801 659l-0 5M767 651l-3 7M851 668l-0 7M768 557l-7 -4M923 566l6 -1M932 599l6 4M929 584l6 2M866 643l3 3M899 610l2 2M892 614l2 3M880 500l2 -4M905 634l3 1M906 526l4 -2M767 603l-6 3M875 519l3 -3M845 481l2 -6M920 534l4 -2M750 506l-3 -2M766 518l-5 -2M877 650l0 4M911 528l8 -1M756 568l-5 0M861 485l6 -5M771 487l-3 -2M876 673l5 4M807 479l-3 -5M853 478l0 -4M859 506l1 -4M789 518l-1 -4M745 621l-4 4M898 631l1 3M767 617l-4 2M872 654l1 5M760 582l-4 1M926 617l5 5M909 531l4 -2M777 638l-3 4M788 665l1 6M830 493l-3 -5M892 516l5 -6M875 647l4 2M830 503l-3 -6M731 564l-5 1M776 637l-2 4M782 632l-4 2M847 683l3 6M766 554l-8 -1M776 653l-3 4M783 643l-3 3M895 509l2 -7M850 662l-1 4M749 617l-7 0M787 630l-2 4M791 524l-2 -7M810 468l-2 -4M755 515l-4 -6M770 536l-7 -2M762 607l-7 0M753 517l-3 -2M903 657l3 3M819 493l2 -6M761 636l-5 4M832 657l-1 7M841 474l2 -6M816 645l-1 3M902 612l4 1M764 651l-3 1M824 498l-0 -3M819 658l-2 4M865 667l5 5M874 513l2 -3M853 470l0 -5M856 518l6 -5M771 550l-8 -0M834 470l4 -7M741 617l-3 2M896 604l4 6M896 641l3 2M869 515l2 -3M896 593l5 1M810 513l-1 -4M838 662l-2 8M896 515l3 -2M867 478l3 -4M745 534l-8 0M836 485l3 -4M877 526l3 -2M837 499l2 -7M813 473l1 -3M731 596l-7 1M770 492l-3 -6M817 486l-1 -7M814 503l-1 -3M795 519l-1 -4M884 640l4 5M762 620l-6 1M899 641l2 4M736 567l-5 -1M866 680l2 3M901 571l6 2M779 664l-1 6M904 616l3 3M851 655l-0 4M902 569l4 0M809 664l-1 8M837 497l-3 -7M887 653l3 5M861 651l1 5M931 603l8 -2M905 561l7 1M761 524l-6 -2M748 611l-6 3M842 670l-0 3M858 512l2 -4M902 636l4 7M772 670l-3 4M896 649l3 4M794 496l-3 -2M760 632l-4 7M778 505l-2 -3M898 654l2 5M837 500l1 -5M812 648l0 4M753 615l-4 1M795 654l-2 2M899 655l7 2M920 608l4 2M798 657l0 3M787 639l-0 3M895 602l7 2M764 570l-4 -3M772 527l-3 -7M753 569l-6 1M900 599l5 -1M899 539l3 -2M870 492l0 -3M887 605l8 -1M833 681l1 6M847 640l3 3M894 599l4 -1M840 670l1 4M912 596l4 0M909 569l3 -1M894 519l2 -3M886 528l2 -2M842 513l-0 -4M724 568l-7 -1M795 659l-3 6M895 571l5 -1M790 483l-4 -3M742 533l-6 -1M891 515l4 -4M770 529l-2 -5M782 658l-5 4M882 532l4 -2M750 604l-3 2M896 512l5 -5M887 532l3 -1M746 571l-3 -0M741 514l-3 -3M862 637l6 5M924 521l1 -3M873 499l3 -2M810 510l-1 -4M784 643l-1 5M892 609l4 1M757 562l-7 -2M831 668l2 5M783 634l-6 4M823 504l-2 -3M858 680l3 4M739 561l-8 1M755 610l-4 0M892 545l4 -4M892 606l3 0M720 582l-5 1M819 484l3 -7M883 534l3 -4M895 569l3 -2M928 553l5 2M751 502l-4 -1M898 585l5 -2M908 565l4 1M875 510l4 -2M905 550l7 -2M875 664l7 4M738 614l-7 2M755 600l-5 -1M878 624l4 1M751 624l-2 5M891 495l3 -3M864 498l1 -4M729 570l-3 -2M769 494l-4 -3M760 660l-2 5M732 528l-5 -3M928 613l5 1M871 647l2 5M858 511l-0 -3M885 539l6 -3M827 646l0 5M795 480l-1 -3M749 565l-7 -0M880 642l2 3M818 654l-1 4M902 552l5 1M836 493l3 -6M761 498l-3 -1M748 584l-7 1M750 503l-2 -5M875 531l1 -4M755 568l-3 -1M884 523l1 -3M778 643l-3 6M908 599l4 4M857 498l3 -3M851 659l-0 5M761 569l-3 1M888 633l2 8M768 520l-4 -1M763 632l-2 2M759 532l-3 -5M765 651l-3 2M755 566l-3 -2M883 508l2 -6M796 515l-5 -5M772 615l-4 6M891 637l4 4M793 504l-1 -6M752 560l-4 0M737 566l-3 -2M841 497l3 -3M830 488l-1 -4M752 532l-3 -2M753 512l-4 -1M795 502l-1 -8M786 487l-0 -6M733 568l-4 -2M765 608l-6 1M798 653l-4 3M936 593l6 2M919 596l8 -1M907 643l4 1M927 617l4 2M897 554l5 -2M897 640l3 4M822 483l1 -8M770 603l-7 1M732 602l-5 1M927 542l5 -4M855 658l4 3M741 601l-3 2M866 500l4 -4M931 574l4 1M863 678l4 6M919 560l5 -0M811 679l1 4M758 498l-4 -5M749 512l-7 -3M793 511l-4 -7M853 488l3 -3M898 568l7 -0M807 642l-0 4M886 540l5 0M903 625l5 3M794 511l-4 -5M902 522l3 -6M862 653l1 7M796 640l-2 3M810 645l-1 4M889 486l4 -4M887 486l2 -2M814 506l-4 -5M801 665l-3 5M850 486l0 -6M897 571l8 -2M841 495l0 -4M777 638l-1 6M930 540l4 -3M902 612l4 6M874 663l0 4M929 553l7 2M904 604l7 2M760 578l-3 1M908 576l6 1M751 628l-4 5M826 673l-0 5M905 643l4 1M740 558l-3 -1M892 532l6 -2M739 591l-7 3M867 518l3 -4M873 503l2 -5M894 624l5 5M903 628l6 5M831 513l1 -8M871 479l-0 -6M894 643l3 6M769 603l-4 1M740 617l-3 2M754 504l-5 -4M930 596l4 2M747 644l-8 1M926 528l3 -5M789 648l-4 2M756 602l-4 -1M750 537l-4 -1M900 565l7 1M764 526l-3 -2M895 582l7 0M773 543l-3 -2M916 528l3 -2M772 669l-1 3M938 575l4 -0M828 686l-2 4M742 626l-4 5M741 633l-5 6M829 660l0 3M737 574l-5 1M742 589l-5 3M800 491l-0 -5M778 522l-2 -6M862 646l4 6M785 489l-5 -3M720 583l-4 -0M911 521l2 -4M727 611l-5 1M743 633l-8 1M779 633l-2 4M743 604l-6 -0M808 512l1 -4M898 635l5 1M878 653l4 3M882 529l2 -3M733 561l-7 -3M919 600l6 3M820 509l2 -7M853 478l-2 -6M784 646l-4 2M773 614l-4 1M766 550l-4 -3M763 542l-4 -3M906 507l2 -5M803 671l-0 7M797 520l-6 -3M837 654l-1 7M893 566l5 1M771 631l-3 3M791 504l-2 -2M741 598l-5 6M742 639l-6 1M853 641l-1 8M754 581l-4 1M926 568l5 -1M853 510l0 -7M761 542l-3 -2M875 665l0 7M740 624l-6 4M861 651l3 3M769 630l-4 5M770 532l-3 -5M912 578l3 1M911 630l6 5M918 613l3 3M756 655l-3 5M743 521l-6 -1M763 624l-6 1M751 500l-4 -1M812 670l-5 5M869 513l1 -6M917 545l4 -5M894 593l4 2M909 621l3 6M869 672l4 4M753 563l-3 0M720 573l-4 1M783 531l-1 -3M741 565l-4 0M727 576l-4 1M752 639l-4 1M745 588l-5 2M900 582l6 -0M788 649l-2 2M912 642l5 2M822 647l1 3M799 680l-4 6M763 629l-1 4M893 549l5 -3M848 683l-2 6M916 586l7 -3M802 510l-3 -4M909 559l7 1M761 580l-4 1" stroke="#d0b05c" stroke-width="1.1" fill="none" stroke-linecap="round"/>
<path d="M935 566l3 1M915 551l6 -5M729 553l-3 -2M826 505l-2 -5M870 645l3 5M737 530l-4 -3M760 644l-4 3M818 501l-3 -3M827 654l2 4M885 664l3 7M762 568l-5 1M776 646l-3 2M759 517l-7 -2M894 586l7 3M792 630l-2 6M882 528l2 -3M776 662l-1 5M825 491l-4 -6M784 482l1 -7M932 539l3 -0M823 669l-0 5M796 650l-4 6M924 536l5 -5M746 535l-5 0M736 587l-7 3M826 682l0 6M804 648l2 7M896 503l6 -3M917 544l5 -3M924 530l4 0M926 553l4 -2M764 582l-7 0M798 636l-1 3M806 495l-4 -4M800 498l-2 -3M826 494l1 -6M922 604l4 -1M854 483l1 -5M841 493l3 -4M754 651l-7 3M912 585l7 -1M914 610l5 5M748 525l-4 -5M767 611l-5 3M804 501l-5 -6M796 654l-3 6M851 679l4 6M746 576l-5 -0M906 587l3 2M794 485l-2 -5M730 536l-4 -3M847 659l2 5M918 620l2 4M796 645l-0 7M749 506l-2 -2M863 509l1 -7M796 473l-1 -5M812 492l-1 -3M764 564l-2 -2M864 633l0 3M858 666l2 3M779 627l-4 4M934 583l6 -0M894 551l5 -1M769 487l-2 -3M786 526l-6 -3M887 658l6 4M912 596l6 3M838 641l2 3M783 491l-3 -7M879 644l2 6M829 510l-2 -6M842 509l1 -3M911 518l2 -4M812 472l-5 -5M786 648l-5 4M880 623l2 3M774 534l-5 -5M841 485l5 -6M910 636l7 3M826 675l-2 4M854 641l0 3M897 597l8 1M879 532l4 -2M788 505l-4 -4M867 641l0 7M843 494l1 -5M737 603l-6 3M796 651l0 5M890 602l5 2M910 636l5 3M815 483l-1 -5M761 516l-7 -1M912 640l8 2M815 671l0 4M915 520l3 -3M921 530l7 -1M739 608l-6 1M758 594l-5 0M932 590l6 2M759 515l-5 -6M931 580l5 4M907 584l7 -1M754 565l-5 2M807 676l-3 6M888 484l1 -4M764 512l-1 -4M917 639l2 3M806 501l-1 -7M754 564l-4 -3M837 650l2 3M900 608l2 2M899 616l4 2M792 519l-5 -3M856 506l0 -7M920 546l3 -3M812 664l-1 3M881 489l1 -7M855 656l-2 7M750 507l-6 -3M782 514l-3 -1M920 565l8 0M893 503l1 -4M735 618l-5 2M906 619l3 2M768 516l-5 -3M763 517l-6 -3M915 567l8 0M885 610l4 4M846 494l2 -6M870 527l7 -3M774 512l-3 -2M877 526l4 -4M853 488l3 -3M752 583l-3 1M748 620l-4 1M858 480l3 -3M825 680l-2 4M756 629l-5 3M769 638l-3 1M856 659l4 6M759 557l-4 -2M887 653l4 7M909 548l6 -2M740 622l-3 5M840 676l3 6M863 658l3 5M743 540l-3 -4M865 486l2 -7M784 513l-5 -5M749 567l-3 0M910 547l4 -0M884 506l2 -3M756 517l-2 -4M801 478l2 -7M773 540l-4 -2M928 581l3 -0M789 677l-0 5M864 503l-0 -7M918 577l7 1M890 601l5 6M912 544l4 -5M754 514l-2 -7M912 622l6 5M875 674l2 4M771 502l-0 -4M880 619l2 5M834 490l0 -8M912 513l2 -4M914 584l3 -1M759 522l-3 -2M804 647l-1 4M725 556l-7 -4M781 510l-2 -7M879 624l7 3M766 643l-2 7M765 662l-2 6M916 585l3 -1M782 527l-7 -3M740 549l-4 0M874 518l3 -3M895 663l5 2M771 655l-1 5M790 478l-1 -6M724 554l-4 1M789 476l-1 -3M842 662l-1 7M894 643l2 5M749 507l-7 -2M906 622l3 3M934 582l4 -1M922 612l7 -1M890 640l3 2M739 551l-8 -1M739 626l-5 1M832 686l-1 4M901 547l6 -2M865 648l4 2M821 676l2 4M895 530l2 -4M920 606l6 2M772 650l-1 3M912 618l5 5M794 642l-4 5M883 543l2 -3M902 532l4 -6M920 576l6 -0M764 568l-3 1M927 558l7 0M733 529l-6 1M832 505l1 -4M899 643l2 5M856 517l1 -3M888 492l3 -3M839 483l0 -3M743 599l-6 2M762 649l-5 2M767 504l-5 -3M743 618l-5 5M850 475l-1 -5M759 562l-4 -2M756 623l-5 2M912 603l4 2M837 468l1 -6M903 640l3 2M752 594l-6 0M908 545l5 -0M817 682l2 4M917 522l6 -3M811 646l-3 4M929 565l6 -0M766 652l-4 3M757 499l-5 -5M892 644l4 2M812 482l-2 -7M872 639l4 4M893 550l4 -5M772 644l-2 4M758 591l-6 1M800 661l1 6M875 503l6 -5M887 530l2 -6M801 659l-2 5M824 654l3 5M765 506l-5 -3M889 602l4 5M747 573l-5 -3M827 491l2 -7M728 588l-4 -1M749 553l-7 -3M900 512l4 -2M826 667l-3 5M752 534l-6 -4M801 513l-3 -6M901 595l3 0M839 497l-1 -6M894 538l5 -0M884 515l5 -4M777 524l-2 -2M826 681l-1 4M730 623l-3 3M795 648l-1 3M772 612l-4 0M758 545l-6 -3M923 621l6 -1M779 522l-7 -2M831 511l3 -6M749 544l-6 -3M734 598l-4 1M816 675l-1 7M787 514l-3 -2M762 498l-4 -2M787 513l0 -4M805 505l-1 -8M800 518l-5 -6M853 491l-2 -6M760 601l-2 2M861 667l1 4M877 657l2 4M804 486l-2 -8M884 524l5 -6M757 629l-6 2M852 516l1 -3M900 608l4 2M918 556l4 -0M835 683l-1 5M821 657l1 5M910 589l4 0M857 645l-0 6M915 542l8 -1M867 656l3 7M842 646l2 4M758 553l-3 -3M789 658l-1 6M722 578l-3 -1M782 513l-0 -6M785 498l0 -4M912 589l5 -1M925 624l5 1M733 547l-4 -1M809 474l-0 -8M839 662l-1 4M915 547l6 2M775 629l-4 5M825 490l-1 -8M914 512l5 -5M820 472l1 -5M774 519l-4 -2M815 504l-0 -7M815 514l-0 -4M845 500l2 -6M935 560l6 -4M904 497l4 -3M760 639l-6 2M893 564l5 -4M783 527l-3 -5M756 653l-5 6M747 630l-5 4M826 684l-2 6M846 500l-1 -5M732 597l-4 4M923 534l5 -3M796 638l-1 3M723 567l-7 4M745 541l-4 -5M761 579l-5 3M849 656l2 3M767 616l-5 4M901 577l8 -0M772 540l-2 -3M840 678l1 7M863 514l4 -4M723 574l-4 -2M935 573l4 -1M866 502l1 -4M739 633l-5 6M818 477l-1 -4M731 573l-4 -3M777 638l-1 4M844 500l-2 -5M800 650l-1 5M892 560l5 -1M843 498l-2 -7M771 656l-1 4M761 618l-2 3M837 477l-0 -7M773 652l-4 3M886 543l4 -3M912 538l5 -3M787 650l-5 6M838 669l2 3M923 584l6 2M763 608l-5 3M781 630l-5 3M922 541l6 1M818 648l-1 3M910 641l3 3M747 621l-4 7M841 666l0 7M755 562l-7 2M909 535l3 -4M828 481l3 -5M760 597l-8 -0M922 561l4 -3M829 486l-2 -6M878 515l1 -5M800 514l-0 -7M767 493l-1 -5M852 476l-1 -4M927 617l6 4M854 643l1 5M762 576l-7 2M767 664l-2 3M825 481l4 -7M839 506l-2 -6M763 565l-6 2M929 579l7 2M733 600l-3 1M869 652l4 3M765 604l-4 4M745 616l-2 4M925 548l4 -3M862 498l4 -4M746 571l-5 -2M803 676l-2 3M728 568l-7 -4M892 558l7 -3M754 576l-8 -0M766 630l-4 2M852 500l5 -6M843 680l-1 4M927 541l3 -4M758 545l-7 -2M895 632l2 3M848 651l4 5M892 601l7 -1M748 528l-5 -2M832 508l0 -4M930 587l3 -1M888 539l5 -1M802 669l-6 5M789 481l-2 -5M837 482l-1 -6M844 504l1 -3M733 598l-4 2M784 623l-7 2M739 563l-5 -1M890 618l6 2M935 574l6 3M915 563l5 -3M900 544l6 -0M898 606l5 5M908 554l6 -4M739 582l-3 1M907 560l5 2M925 624l4 -0M856 474l-2 -7M826 476l-0 -3M827 668l1 4M762 531l-4 -2M747 555l-5 1M887 517l2 -5M855 660l0 3M730 607l-7 2M731 580l-3 -1M832 669l-1 4M851 668l5 5M866 647l1 6M908 636l3 6M761 529l-7 -3M744 576l-4 0M872 490l3 -4M824 468l-2 -5M931 549l4 1M925 609l4 4M756 562l-3 -1M726 601l-4 2M805 494l-3 -3M797 679l-3 5M751 548l-4 -5M909 651l3 3M922 606l3 3M758 641l-7 2M888 624l4 5M740 550l-6 -1M739 564l-4 -0M834 500l3 -7M757 576l-5 1M739 639l-3 3M905 511l4 -5M922 636l4 -0M894 600l4 -0M798 477l-2 -5M897 576l6 2M907 654l1 4M903 524l6 -3M873 528l2 -3M828 488l1 -4M934 549l2 -2M817 682l1 4M860 639l4 2M762 555l-7 -1M760 545l-3 -2M824 661l-2 8M936 601l4 3M733 530l-5 -1M833 681l-0 5M865 513l1 -6M882 630l3 6M797 479l-1 -5M887 543l4 -3M852 510l2 -7M762 504l-3 -2M780 639l-1 4M889 630l5 6M763 522l-7 -1M885 542l4 -3M853 512l2 -3M867 522l0 -4M764 624l-4 2M911 515l2 -5M763 577l-4 -2M896 531l6 -5M883 541l2 -2M759 604l-4 2M801 682l-4 3M730 540l-4 -4M869 513l1 -5M774 625l-3 5M899 595l6 4M933 572l5 -4M916 568l6 0M780 505l-0 -5M744 538l-8 -1M821 651l2 4M740 628l-6 3M846 475l0 -4M801 682l-0 4M867 522l6 -4M920 594l4 1M886 513l4 -2M748 508l-3 -2M894 495l1 -4M918 586l4 2M906 564l4 1M778 488l-0 -5M905 523l4 -1M744 556l-7 -3M934 587l5 -2M838 500l2 -4M885 628l2 4M907 593l3 -1M895 532l5 -3M864 513l1 -4M812 649l-1 4M852 491l4 -4M738 609l-4 5M860 659l0 3M821 656l3 7M842 511l5 -6M757 634l-3 5M913 647l2 4M785 677l-1 3M750 630l-2 6M878 639l3 4M834 659l-1 4M789 477l-4 -3M893 545l3 -3M756 610l-6 -0M771 630l-6 1M789 630l-1 3M775 515l-1 -7M880 505l1 -4M758 621l-7 4M928 545l4 -1M761 505l-5 -1M827 496l-2 -6M864 495l3 -3M832 481l3 -7M851 640l6 4M747 639l-6 2M911 553l5 -1M853 517l0 -4M752 523l-3 -0M831 506l-3 -5M805 642l-6 5M765 563l-6 -5M902 569l8 1M887 510l3 -5M824 676l-3 6M778 517l-3 -2M787 483l-3 -5M866 674l1 3M730 533l-5 -1M926 601l6 -0M831 659l1 7M760 655l-1 4M780 672l-1 4M811 657l-2 5M846 497l1 -6M771 544l-4 -4M887 537l5 -3M753 552l-6 -2M758 588l-6 1M833 479l2 -3M807 673l-2 5M912 516l3 -1M889 552l5 0M807 638l-2 3M820 645l1 6M737 524l-4 -1M907 543l4 -2M731 589l-7 2M838 497l4 -6M929 549l6 -1M790 489l-4 -7M742 568l-3 -1M906 650l2 7M829 671l-1 6M740 537l-5 -1M737 600l-5 1M823 680l-1 8M757 513l-2 -4M889 500l4 -2M773 611l-2 3M894 622l7 0M800 638l-2 3M858 641l4 6M776 541l-2 -3M896 527l4 -2M921 600l7 -1M764 503l-3 -3M857 672l-0 4M733 566l-5 -3M868 649l4 5M828 510l-3 -5M847 677l2 3M747 566l-7 3M935 593l6 4M806 661l-1 5M858 510l1 -4M744 613l-5 -1M882 532l2 -5M775 611l-5 2M840 512l1 -6M900 605l4 4M883 488l4 -4M774 662l-0 5M848 649l0 5M896 663l3 3M793 666l-1 3M776 646l-1 4M776 656l-3 2M901 586l3 2M870 659l2 5M876 529l1 -4M862 662l2 3M823 660l-1 4M899 518l7 -4M852 675l2 6M723 589l-5 3M807 486l1 -7M751 502l-2 -3M910 546l7 0M883 518l3 -4M871 631l5 3M876 621l2 3M894 543l5 0M768 643l-7 3M839 504l-2 -3M757 534l-4 -0M852 670l-0 4M746 610l-5 1M883 512l7 -3M910 631l2 4M790 502l-3 -2M782 625l-2 3M764 631l-3 4M894 636l1 5M847 653l-0 4M892 497l6 -4M821 648l-2 6M776 615l-6 2M799 518l-0 -5M782 637l-6 3M749 520l-2 -4M889 499l0 -4M914 622l3 5M759 636l-7 3M741 517l-6 -3M915 551l6 -6M790 641l-6 4M773 487l-6 -5M904 557l3 -0M773 609l-2 4M898 573l4 -2M858 474l4 -6M863 475l1 -6M793 633l-3 4M840 501l1 -4M755 624l-7 1M724 578l-7 -2M855 647l1 7M820 490l-4 -7M912 614l4 6M838 670l1 3M823 485l2 -4M812 643l-2 6M738 619l-5 4M863 637l6 5M870 516l5 -5M885 501l2 -6M822 674l0 7M752 621l-4 2M912 546l4 -2M768 627l-5 4" stroke="#a8883a" stroke-width="1.1" fill="none" stroke-linecap="round"/>
<path d="M913 535l3 0M773 546l-6 -3M838 486l4 -6M820 488l2 -6M764 550l-4 -1M889 551l5 -2M892 638l4 4M903 586l7 1M883 520l3 -2M900 587l7 -1M723 594l-4 1M811 481l1 -5M841 489l-0 -8M919 572l8 -2M856 482l1 -4M929 594l7 -1M911 528l3 -3M904 512l5 -3M813 648l-4 6M767 541l-3 -4M904 632l2 4M903 562l4 1M861 656l2 7M767 624l-5 4M864 632l4 3M891 504l3 -7M753 591l-7 4M755 551l-3 -2M781 511l-4 -4M781 641l-6 4M920 572l7 4M748 561l-5 -2M885 634l2 3M729 561l-7 3M903 580l6 3M823 645l-5 6M844 658l-2 6M895 504l1 -3M816 685l2 4M724 559l-6 2M846 515l2 -5M897 541l3 -5M763 593l-5 -1M805 673l-3 3M833 645l3 6M793 649l-1 6M739 548l-6 1M817 665l3 7M791 642l-3 6M903 602l3 4M892 617l3 2M767 620l-5 4M828 654l0 8M909 502l4 -2M750 604l-6 0M778 483l-2 -3M766 523l-5 -3M738 543l-7 -3M764 570l-5 -3M727 605l-6 2M824 499l1 -3M762 512l-3 -2M838 644l-2 7M892 559l4 0M750 503l-3 -5M810 638l-1 8M725 608l-3 1M759 609l-4 6M758 535l-5 -0M758 559l-6 -0M728 577l-5 -1M743 515l-4 -5M857 471l1 -3M861 655l2 7M768 544l-4 -3M851 471l1 -3M842 640l-1 7M787 650l-0 7M858 654l2 4M935 571l6 4M798 649l-1 5M903 627l6 3M853 503l3 -6M770 626l-2 4M896 507l5 -2M887 627l2 4M907 552l7 2M915 520l4 -0M734 535l-5 -3M764 630l-3 5M743 556l-5 -2M725 580l-3 1M805 637l-0 4M788 513l-4 -2M778 616l-7 1M936 578l4 1M753 652l-2 5M843 646l1 7M824 494l-2 -5M863 495l3 -4M749 652l-3 1M808 494l-5 -5M840 491l1 -4M876 646l-0 7M878 662l4 2M903 599l4 3M799 648l-4 3M851 498l3 -5M854 668l2 3M823 686l-1 4M869 653l4 4M753 566l-4 2M792 645l-1 4M850 669l5 6M889 659l3 6M789 668l-3 3M848 641l3 6M745 584l-7 0M884 620l3 0M826 470l1 -4M879 511l2 -4M855 516l-1 -4M901 514l5 -4M911 614l8 -0M905 621l3 2M934 565l3 1M919 630l5 1M748 525l-6 -5M902 589l3 2M804 641l-4 5M747 563l-3 -1M863 521l0 -6M759 529l-3 -4M771 509l-2 -7M879 534l3 -2M923 570l4 2M829 504l-3 -5M847 505l-1 -5M893 535l1 -3M743 621l-7 3M764 662l-2 4M749 551l-3 -4M740 569l-6 -0M861 482l0 -4M911 557l7 -2M765 664l-1 4M740 594l-5 4M883 627l2 4M860 633l6 4M746 575l-5 3M904 555l8 -2M757 631l-4 5M855 670l5 6M917 565l7 -2M733 585l-7 -1M760 590l-6 -2M928 626l2 3M916 525l3 -2M756 643l-6 5M860 519l1 -6M875 492l3 -5M761 549l-4 1M813 509l-3 -3M817 475l-2 -6M914 618l6 1M914 522l3 -1M822 677l-2 7M783 657l-3 3M785 526l-5 -1M895 544l6 0M910 606l6 -1M791 511l-5 -3M933 541l4 -1M922 628l3 2M821 497l-2 -8M798 484l0 -5M932 550l3 -2M778 637l-6 3M775 668l-3 1M836 496l4 -6M877 637l1 5M895 626l7 0M837 497l-1 -6M912 604l5 2M912 597l6 5M838 657l1 4M932 572l3 -0M751 587l-6 4M726 556l-5 -0M909 598l6 -0M864 493l2 -5M921 624l4 6M892 535l4 -7M824 655l-0 8M750 639l-3 3M905 642l3 5M885 621l5 3M887 514l5 -2M851 640l-0 7M846 500l1 -4M878 496l5 -5M797 671l1 6M737 552l-7 -1M824 648l0 4M753 555l-6 -0M763 506l-4 -2M884 649l5 4M933 568l5 1M912 563l2 -2M738 634l-5 3M733 539l-3 -3M888 510l3 -4M904 545l3 -4M895 527l6 -2M908 554l7 -0M858 482l-2 -7M724 597l-5 5M905 626l3 4M861 486l2 -4M830 680l-0 4M907 587l5 -1M893 631l2 3M868 502l1 -5M935 584l5 -3M815 642l-2 4M808 675l-1 7M816 666l-2 3M906 616l5 1M765 645l-2 7M841 509l1 -7M906 596l6 0M855 513l2 -5M892 519l6 -5M804 678l-5 5M880 642l1 6M932 589l5 1M827 491l1 -6M762 588l-7 4M859 679l-2 6M901 567l5 2M801 473l-3 -4M905 521l7 -1M856 495l1 -8M840 505l2 -3M896 597l5 4M741 581l-4 -0M901 603l4 5M929 557l4 -3M910 597l5 3M805 492l-5 -6M812 642l-0 5M826 503l2 -3M789 491l0 -4M844 645l3 4M930 538l3 -1M765 545l-4 -2M876 643l1 4M834 483l-1 -3M885 640l4 3M920 578l3 1M786 664l-2 4M844 496l0 -3M784 479l-3 -3M931 609l6 -0M886 484l3 -4M830 649l1 4M775 504l-4 -6M772 618l-8 1M872 495l0 -4M735 577l-5 2M886 613l4 4M726 574l-7 -2M780 518l-5 -2M759 625l-4 2M900 631l5 5M871 647l2 3M772 646l-3 2M845 639l2 7M919 588l5 3M919 544l4 -0M844 476l-1 -3M908 557l3 -2M858 656l1 5M824 497l1 -6M934 571l3 2M884 661l6 3M740 639l-3 4M723 604l-4 1M910 623l7 -0M825 667l-2 7M795 477l-1 -6M815 495l1 -4M729 530l-4 -2M894 499l4 -3M826 494l-1 -5M777 660l-1 3" stroke="#7a5e22" stroke-width="1.1" fill="none" stroke-linecap="round"/>
<path d="M788 665l0 3M818 487l-3 -3M924 546l5 -5M758 658l-3 6M818 653l-1 4M825 643l1 8M912 645l6 1M731 530l-3 -4M930 536l5 1M804 652l-3 6M735 633l-3 3M911 572l4 1M916 628l3 3M911 548l4 -3M749 575l-4 1M865 474l3 -4M805 478l-4 -6M836 487l4 -5M898 569l4 -2M844 658l4 7M755 502l-5 -3M898 612l5 4M763 643l-2 3M907 559l5 -2M896 606l4 1M886 611l6 4M902 522l7 -0M789 659l-2 4M894 520l1 -3M740 558l-2 -2M807 657l-3 7M830 489l3 -6M831 490l-1 -7M897 585l4 2M902 596l3 2M786 525l-3 -7M785 480l-2 -6M889 497l4 -7M774 619l-4 4M930 577l3 2M758 616l-6 5M762 563l-3 -1M921 607l4 2M818 502l2 -3M908 535l3 -2M895 598l6 5M846 639l3 3M890 645l2 6M893 506l5 -5M735 620l-8 1M881 509l1 -5M879 623l5 2M849 647l2 2M818 656l-4 7M751 537l-5 -0M758 548l-7 -2M896 555l7 2M761 575l-5 -0M916 592l7 0M783 631l-1 5M770 653l-5 2M746 571l-4 1M773 536l-7 -2M822 644l-5 6M767 549l-6 -4M827 503l2 -6M787 643l-0 3M889 609l4 6M762 564l-7 -1M834 642l-2 6M748 604l-4 -1M903 640l3 3M763 520l-2 -5M755 512l-4 -2M772 645l-1 7M913 619l6 5M795 657l-5 5M746 553l-5 -6M724 559l-7 -0M906 531l4 -1M901 653l6 5M812 488l-2 -5M807 494l-1 -8M740 633l-2 3M764 522l-2 -2M888 613l2 5M935 567l3 -2M873 511l6 -3M848 669l0 7M933 571l6 1M924 595l7 -1M766 616l-5 5M790 659l0 5M802 655l0 5M807 492l1 -3M749 538l-7 -2M842 484l1 -3M746 566l-6 1M753 573l-6 -1M783 672l-3 2M771 658l-4 3M868 657l4 3M878 532l3 -7M873 650l6 3M865 523l3 -5M740 595l-3 1M812 647l-3 3M764 621l-5 1M922 545l7 -2M740 567l-5 -3M825 470l3 -5M732 607l-4 5M890 660l3 4M901 561l6 -2M893 631l3 1M880 492l1 -3M776 626l-4 5M924 604l3 3M869 520l0 -5M901 540l5 -3M878 628l2 4M746 590l-6 2M749 552l-5 -3M806 514l-1 -7M839 505l-1 -4M809 487l0 -3M870 647l-0 8M878 665l2 3M912 506l2 -5M900 638l3 7M902 623l3 6M745 580l-8 0M900 616l7 2M899 586l5 2M924 623l7 1M756 556l-3 1M876 526l7 -3M866 673l4 3M738 579l-3 2M911 574l5 -3M763 642l-7 1M758 656l-5 2M904 554l4 -3M884 628l6 2M786 671l-2 4M805 665l-2 4M914 603l4 -1M815 675l-3 3M914 562l5 -1M731 555l-3 1M761 603l-4 -1M781 661l-1 5M766 530l-3 -5M892 500l2 -4M881 484l-0 -7M893 643l4 5M809 667l-3 7M832 501l-0 -4M812 512l1 -7M900 540l3 -2M866 475l1 -5M815 649l-2 6M888 633l2 3M749 600l-4 3M822 650l1 3M928 535l4 -1M817 646l-1 7M735 547l-6 -5M842 658l3 7M884 612l5 2M920 581l7 -3M758 545l-6 -5M775 621l-3 6M767 509l-3 -3M768 501l-1 -3M828 512l-2 -4M870 512l6 -4M804 476l-1 -7M783 650l-1 3M895 634l3 3M753 506l-2 -6M859 637l5 5M921 564l4 -2M906 611l4 2M920 596l4 4M858 475l3 -5M896 631l2 3M847 647l-1 7M874 631l3 3M899 597l6 1M915 594l4 1M763 520l-5 -3M772 489l-5 -6M831 470l2 -3M877 523l1 -4M743 606l-6 -1M857 493l-0 -6M728 554l-6 -1M856 495l-0 -6M757 502l-6 -2M887 539l7 -1M900 544l6 -1M771 613l-6 5M789 644l-3 6M894 636l4 2M839 485l4 -7M746 580l-7 -2M819 656l1 8M822 683l2 7M812 507l-0 -4M812 646l2 5M898 491l0 -5M899 620l5 1M866 662l3 3M765 616l-2 4M905 510l3 -1M866 522l5 -2M918 592l4 -1M911 601l2 3M865 639l1 5M764 577l-5 -2M723 604l-4 3M757 648l-4 6M800 656l-2 4M730 569l-7 3M887 624l5 1M932 551l6 -3M757 537l-3 -5M894 565l5 -2M876 514l3 -2M902 639l2 5M846 656l0 3M875 667l3 5M780 524l-4 -2M924 605l4 1M861 482l-0 -4M758 547l-5 -1M739 630l-2 3M733 601l-3 1M931 558l7 2M815 506l1 -5M871 659l-0 6M882 511l1 -6M779 672l-5 3M743 615l-3 -0M747 596l-6 1M835 472l-0 -4M755 529l-5 -4M812 500l-3 -4M815 657l0 5M843 670l-2 5M797 649l0 7M752 530l-5 -3M898 651l2 5M791 638l-6 3M793 487l-2 -6M821 501l0 -7M874 500l3 -6M901 516l3 -6M814 473l-3 -4M739 550l-3 -2M767 548l-4 -1M927 608l3 3M765 624l-4 1M767 536l-6 -2M907 509l7 -3M732 605l-7 0M800 494l-4 -4M820 673l3 7M769 621l-3 4M795 491l-0 -5M765 503l-1 -3M877 533l4 -5M907 502l2 -6M901 573l5 1M918 583l6 -3M766 660l-2 6M747 599l-7 0M772 494l-2 -3M739 607l-8 1M796 654l-1 6M856 660l-1 6M876 510l6 -3M879 653l2 6M930 620l4 0M855 499l-1 -6M898 504l6 -2M813 679l-3 7M777 490l-3 -3M906 649l6 4M772 530l-2 -4M768 509l-1 -4M795 634l-5 3M756 563l-4 1M885 483l2 -4M745 607l-8 2M914 563l5 -2M799 649l-1 6M769 548l-5 -0M919 605l4 -1M899 590l7 3M825 672l-3 5M866 492l-1 -4M772 613l-3 1M788 507l-4 -2M805 516l-1 -8M797 641l-3 7M754 567l-5 2M826 507l-0 -3M917 513l4 -1M795 520l-1 -4M878 648l1 5M911 584l5 -0M779 519l-4 -4" stroke="#ecd88a" stroke-width="1.1" fill="none" stroke-linecap="round"/>
<path d="M911 593l4 2M838 661l-1 5M739 573l-5 1M762 583l-5 0M893 560l3 1M907 502l3 -5M786 655l-3 3M799 503l-2 -5M774 660l-5 3M788 524l-6 -3M783 490l-1 -4M828 673l-0 6M895 652l2 4M886 510l2 -8M849 639l1 4M748 641l-3 6M823 473l0 -5M893 577l4 -1M745 601l-6 3M747 585l-5 1M779 513l-4 -2M759 615l-6 5M869 478l5 -4M746 591l-6 -2M902 563l4 1M920 613l4 4M778 616l-3 3M775 486l-1 -8M840 496l-2 -4M745 646l-4 2M825 643l0 6M801 508l-2 -6M740 617l-5 5M843 671l-1 6M750 532l-6 -3M760 559l-2 -2M834 673l0 4M914 609l2 2M736 617l-6 0M896 609l3 3M789 483l-1 -3M844 480l1 -5M902 504l3 -3M756 588l-3 2M900 583l5 4M845 672l5 5M886 666l1 4M932 599l3 1M825 685l0 5M900 618l5 3M904 557l5 -2M889 642l2 6M894 632l5 3M791 651l-4 4M918 598l6 1M899 496l3 -4M779 654l-3 1M928 546l5 -4M866 655l1 3M766 503l-1 -7M876 666l3 5M896 577l3 0M785 639l-7 3M783 528l-1 -3M880 492l3 -3M787 630l-1 4M732 543l-7 1M748 553l-7 -2M923 535l2 -3M901 549l4 -0M743 540l-4 -5M760 532l-6 -4M839 481l1 -4M814 469l-2 -4M892 644l5 2M759 553l-4 -0M869 504l3 -4M749 557l-4 0M757 629l-2 4M751 593l-3 2M755 556l-3 -1M843 649l-2 5M777 644l-3 3M893 558l6 -1M761 557l-5 1M873 624l3 2M897 602l4 -1M897 623l6 2M846 644l3 5M778 525l-2 -4M794 640l-4 4M908 534l6 -2M883 625l4 2M785 640l-2 3M833 497l3 -6M901 642l5 3M761 522l-5 -5M870 632l1 6M844 673l3 5M767 524l-7 -3M886 509l2 -5M758 579l-4 -1M796 658l-3 6M906 509l3 -2M734 537l-3 -1M913 545l3 -1M848 498l-1 -5M920 591l4 3M747 647l-1 3M774 610l-3 3M746 513l-6 -3M749 568l-4 1M783 523l-3 -5M911 582l4 1M811 513l-2 -5M904 656l2 4M829 649l-2 5M732 626l-5 -0M781 626l-5 6M759 565l-7 2M756 546l-4 -1M895 561l3 -2M831 501l-1 -6M811 640l-3 4M745 626l-2 2M795 502l-2 -6M907 539l3 -5M776 619l-3 4M745 553l-4 -4M741 516l-4 -2M750 636l-4 7M931 571l6 -3M890 647l4 7M846 656l-2 5M872 520l1 -4M830 666l-0 6M791 489l-1 -3M857 490l1 -8M927 529l3 -4M784 487l-0 -3M792 503l-2 -3M864 673l2 4M756 574l-6 -3M748 584l-4 -2M806 649l-4 5M815 501l-1 -4M856 516l0 -4M744 515l-2 -2M788 660l-0 3M873 663l-0 3M895 525l3 -5M867 653l1 6M721 568l-5 -1M905 630l7 0M914 545l5 -5M814 659l-2 5M752 541l-3 -5M887 529l7 -2M841 640l-1 5M901 648l4 3M779 531l-1 -4M769 636l-6 3M935 606l3 3M761 550l-3 -1" stroke="#54400e" stroke-width="1.1" fill="none" stroke-linecap="round"/>

<circle cx="829.2" cy="576.6" r="67" fill="url(#stl)"/>
<filter id="mot2" x="0" y="0" width="100%" height="100%"><feTurbulence type="fractalNoise" baseFrequency="0.08" numOctaves="3" seed="9"/><feColorMatrix type="matrix" values="0 0 0 0 0.85  0 0 0 0 0.88  0 0 0 0 0.95  1.4 0 0 0 -0.6"/><feComposite in2="SourceGraphic" operator="in"/></filter>
<circle cx="829.2" cy="576.6" r="67" fill="#fff" filter="url(#mot2)" opacity="0.45"/>
<circle cx="829.2" cy="576.6" r="65.5" fill="none" stroke="#aab2c8" stroke-width="1.5" opacity="0.8"/>
<circle cx="829.2" cy="577" r="38" fill="#b8bdcc"/>
<circle cx="829.2" cy="577" r="36.5" fill="none" stroke="#cfd4e0" stroke-width="2"/>
<circle cx="829.2" cy="577" r="15.3" fill="#bcc2d0" stroke="#7c849a" stroke-width="2"/>
<circle cx="829.2" cy="577" r="6.5" fill="#e8e9ee" stroke="#6a7080" stroke-width="1.5"/>
<path id="arcT" d="M840 521 A57 57 0 0 1 876 612" fill="none"/>
<path id="arcB" d="M818 634 A57 57 0 0 1 792 530" fill="none"/>
<text font-family="Liberation Sans" font-size="11" font-weight="bold" fill="#dfe3ee" letter-spacing="1.2"><textPath href="#arcT">MAX 4500 R.P.M</textPath></text>
<text font-family="Liberation Sans" font-size="10.5" font-weight="bold" fill="#dfe3ee" letter-spacing="0.6"><textPath href="#arcB">WEAR EYE PROTECTION</textPath></text>
</svg>
<div class="t" style="left:631px;top:711.8px;font-size:13px;color:#111;letter-spacing:1.1px">4307-258 <b style="letter-spacing:1.52px">Amadeus 001</b></div>
<div class="a" style="left:1047px;top:447px;width:402px;height:291px;background:#fff;border:1px solid #c9c9c9;border-radius:3px;overflow:hidden"><div class="a" style="left:0;top:250px;width:400px;height:40px;background:#f4f4f4"></div></div>
<svg class="a" style="left:1047px;top:447px" width="402" height="291" viewBox="1047 447 402 291">
<defs>
<linearGradient id="ylw" x1="0" y1="0" x2="0" y2="1"><stop offset="0" stop-color="#f9d21c"/><stop offset="0.5" stop-color="#f5c80e"/><stop offset="1" stop-color="#eab800"/></linearGradient>
<linearGradient id="chk" x1="0" y1="0" x2="0" y2="1"><stop offset="0" stop-color="#7a7c80"/><stop offset="0.35" stop-color="#e8e8e8"/><stop offset="1" stop-color="#5c5e62"/></linearGradient>
</defs>
<path d="M1084 491.5 L1088 488.5 H1160 V496 H1088Z" fill="#5e5650"/>
<path d="M1090 489 l3 7 M1097 489 l3 7 M1104 489 l3 7 M1111 489 l3 7 M1118 489 l3 7 M1125 489 l3 7 M1132 489 l3 7 M1139 489 l3 7 M1146 489 l3 7 M1153 489 l3 7" stroke="#d6d0c8" stroke-width="1.8"/>
<rect x="1158" y="489.5" width="26" height="6" fill="#4a4846"/>
<rect x="1183" y="482" width="20" height="25" rx="3" fill="url(#chk)"/>
<circle cx="1196" cy="487" r="2" fill="#333"/>
<rect x="1202" y="478.5" width="32" height="33" rx="4" fill="#1b1b1b"/>
<path d="M1234 474 C1234 471 1237 470 1240 470 H1280 L1295 480.5 H1386 C1392 481 1395 486 1396 492 C1400 505 1407 525 1412 545 C1417 570 1418 600 1417 625 C1417 645 1415 660 1410 667 C1404 672 1392 674 1383 673 C1374 670 1368 666 1367 656 C1368 645 1373 635 1374 625 C1374 615 1372 608 1370 604 H1358 L1355 576 C1350 570 1343 566 1336 564 C1320 560 1300 557 1274 555 C1262 552 1252 549 1246 543 C1238 535 1234 520 1234 500Z" fill="url(#ylw)"/>
<path d="M1262 474 C1258 490 1258 530 1270 553" stroke="#e0ac00" stroke-width="1.2" fill="none" opacity="0.6"/>
<path d="M1270 500 C1270 492 1276 488 1284 488 H1388" stroke="#e0ac00" stroke-width="1.2" fill="none" opacity="0.6"/>
<path d="M1312 481 C1311 474 1314 471 1318 471 H1350 C1354 472 1356 476 1355 481 H1350 C1350 478 1348 476 1346 476 H1318 C1316 476 1315 478 1316 481Z" fill="#e89a00"/>
<path d="M1337 562 H1362 C1367 572 1371 585 1372 604 H1358 L1355 578 C1350 572 1344 568 1337 566Z" fill="#161616"/>
<circle cx="1388" cy="594" r="10.5" fill="#f0c000"/>
<circle cx="1388" cy="594" r="6.5" fill="#1a1a1a"/>
<path d="M1278 502 h12 M1278 508 h12 M1278 514 h12 M1278 520 h12 M1278 526 h12 M1278 532 h12 M1278 538 h12 M1278 544 h12" stroke="#2a2200" stroke-width="2.4"/>
<path d="M1364 510 l6 33 M1371 514 l6 26 M1377 518 l5 19" stroke="#5a4000" stroke-width="2.2"/>
<ellipse cx="1373" cy="482.5" rx="1.6" ry="2.4" fill="#3a3020"/><ellipse cx="1379" cy="483" rx="1.6" ry="2.4" fill="#3a3020"/><ellipse cx="1384.6" cy="483.5" rx="1.6" ry="2.4" fill="#3a3020"/>
<path d="M1398 672 C1408 676 1418 680 1430 688" stroke="#1a1a1a" stroke-width="4" fill="none"/>
</svg>
<div class="t" style="left:1053px;top:711.8px;font-size:13px;color:#111;letter-spacing:1.1px">4307-259 <b style="letter-spacing:1.58px">Amadeus 002</b></div>
<div class="a" style="left:625px;top:759px;width:402px;height:210px;background:#fff;border:1px solid #c9c9c9;border-radius:3px;border-bottom:none;border-radius:3px 3px 0 0;overflow:hidden"></div>
<svg class="a" style="left:625px;top:759px" width="402" height="210" viewBox="625 759 402 210">
<defs>
<linearGradient id="rt" x1="0" y1="0" x2="0" y2="1"><stop offset="0" stop-color="#c82424"/><stop offset="0.12" stop-color="#e53a34"/><stop offset="0.45" stop-color="#ee4a42"/><stop offset="1" stop-color="#d42c2a"/></linearGradient>
<linearGradient id="blk" x1="0" y1="0" x2="1" y2="1"><stop offset="0" stop-color="#2c2c2c"/><stop offset="0.6" stop-color="#262626"/><stop offset="1" stop-color="#161616"/></linearGradient>
<linearGradient id="mtr" x1="0" y1="0" x2="1" y2="0"><stop offset="0" stop-color="#8c8c8c"/><stop offset="0.3" stop-color="#d8d8d8"/><stop offset="1" stop-color="#a8a8a8"/></linearGradient>
</defs>
<path d="M712 879 H888 C900 879 906 900 906 925 C906 950 902 968 890 968 H712 C703 968 699 950 699 925 C699 900 703 879 712 879Z" fill="url(#rt)"/>
<rect x="750" y="918" width="95" height="46" fill="#f26a5e" opacity="0.3"/>
<rect x="701" y="883" width="12" height="8" fill="#1a1a1a"/>
<path d="M697 834 C700 829 712 827 738 828 V883 H699 C695 870 694 850 697 834Z" fill="url(#mtr)"/>
<path d="M698 842 h38 M697 851 h39 M697 860 h39 M698 869 h38" stroke="#9a9a9a" stroke-width="1.2"/>
<rect x="696" y="818" width="9" height="11" rx="1.5" fill="#e02828"/>
<path d="M691 770 C700 767 716 769 730 773 C755 779 790 792 812 801 C822 806 828 810 830 818 C834 822 836 830 836 845 C836 860 836 874 832 882 C828 887 822 887 812 884 L806 878 V870 H738 V830 L731 828 V800 L720 797 H691Z" fill="url(#blk)"/>
<path d="M705 782 H722 V797 H705Z" fill="#111"/>
<path d="M712 797 C712 790 716 784 724 784 C730 786 732 792 732 800 V828 H712Z" fill="#121212"/>
<path d="M742 812 C760 811 778 811 792 812 M744 822 C765 821 785 821 800 823 M745 836 C770 835 795 835 812 838 M745 846 C772 845 800 845 818 848 M745 856 C772 855 800 855 820 858 M745 866 C772 865 800 865 820 868" stroke="#3e3e3e" stroke-width="1.4" fill="none"/>
<rect x="720" y="778" width="14" height="18.5" fill="#f6ee7a"/>
<path d="M738 871 H805 V897 H738Z" fill="#dc2e2c"/>
<circle cx="742" cy="869" r="2" fill="#ccc"/><circle cx="783" cy="866" r="2" fill="#ccc"/><circle cx="742" cy="876" r="2" fill="#ccc"/><circle cx="784" cy="875" r="2" fill="#ccc"/>
<path d="M714 790 C714 830 714 860 716 880 C718 896 724 903 736 903 H862" stroke="#a0a0a0" stroke-width="3.5" fill="none"/>
<path d="M714 790 C714 830 714 860 716 880 C718 896 724 903 736 903 H862" stroke="#d8d8d8" stroke-width="1" fill="none" stroke-dasharray="1.5 1.5"/>
<rect x="855" y="900" width="10" height="7" rx="1" fill="#b89a50"/>
<path d="M862.5 862 V880" stroke="#d8302c" stroke-width="5.5"/>
<path d="M884 880 C886 860 892 820 896 806 C898 797 901 793 905 792" stroke="#d8302c" stroke-width="6.5" fill="none"/>
<path d="M899 792 L910 780 L925 780 L932 792 L928 805 L912 807 L902 802Z" fill="#b6b8be"/>
<path d="M906 786 l14 4 M910 800 l14 -8" stroke="#8a8c92" stroke-width="1.2"/>
<rect x="842" y="814" width="33" height="41" rx="2" fill="#1e1e1e"/>
<rect x="852.5" y="808" width="7.5" height="7" rx="1" fill="#d42424"/>
<rect x="878" y="837.5" width="15" height="13" rx="2" fill="#1e1e1e"/>
<circle cx="866.7" cy="857.3" r="10.9" fill="#f2f2f2" stroke="#333" stroke-width="1.8"/>
<circle cx="889.2" cy="858" r="8.8" fill="#f2f2f2" stroke="#333" stroke-width="1.8"/>
<path d="M870 852 A6 6 0 0 1 871 862 M892 853 A5 5 0 0 1 893 862" stroke="#d33" stroke-width="1.2" fill="none"/>
<path d="M845 855 C846 875 850 880 858 885 C885 900 920 915 935 963" stroke="#161616" stroke-width="2.2" fill="none"/>
<path d="M838 884 C842 882 846 878 846 866" stroke="#161616" stroke-width="2" fill="none"/>
<path d="M722 964 C726 950 756 948 762 964Z" fill="#222"/>
</svg>
<div class="a" style="left:1047px;top:759px;width:402px;height:210px;background:#fff;border:1px solid #c9c9c9;border-radius:3px;border-bottom:none;border-radius:3px 3px 0 0;overflow:hidden"></div>
<svg class="a" style="left:1047px;top:759px" width="402" height="210" viewBox="1047 759 402 210">
<defs>
<linearGradient id="bt" x1="0" y1="0" x2="0" y2="1"><stop offset="0" stop-color="#2898cf"/><stop offset="0.15" stop-color="#34ace0"/><stop offset="0.5" stop-color="#3db4e6"/><stop offset="1" stop-color="#2a9bd2"/></linearGradient>
<linearGradient id="mot" x1="0" y1="0" x2="0" y2="1"><stop offset="0" stop-color="#a0a0a0"/><stop offset="0.35" stop-color="#e6e6e6"/><stop offset="0.7" stop-color="#c8c8c8"/><stop offset="1" stop-color="#9a9a9a"/></linearGradient>
<linearGradient id="fin" x1="0" y1="0" x2="1" y2="1"><stop offset="0" stop-color="#c8c8c8"/><stop offset="1" stop-color="#8e8e8e"/></linearGradient>
</defs>
<path d="M1146 869 H1338 C1352 869 1358 895 1358 920 C1358 945 1354 970 1340 970 H1146 C1134 970 1129 945 1129 920 C1129 895 1134 869 1146 869Z" fill="url(#bt)"/>
<path d="M1127 873 L1131 865 H1136 L1147 873" stroke="#2a9bd2" stroke-width="3.2" fill="none"/>
<rect x="1180.5" y="844" width="63" height="27" fill="#2d9fd4"/>
<path d="M1131 826 H1184 V860 H1140 C1133 855 1131 842 1131 826Z" fill="url(#fin)"/>
<path d="M1133 832 h48 M1133 840 h48 M1134 848 h47" stroke="#8a8a8a" stroke-width="1.2"/>
<path d="M1136 774 L1150 768 L1166 770 L1178 780 L1181 800 L1178 818 L1165 824 L1142 820 L1134 804Z" fill="url(#fin)"/>
<path d="M1140 780 h36 M1138 787 h41 M1137 794 h43 M1137 801 h43 M1138 808 h41 M1141 815 h35" stroke="#6e6e6e" stroke-width="1.5"/>
<circle cx="1146" cy="786" r="2.2" fill="#ddd"/><circle cx="1168" cy="784" r="2.2" fill="#ddd"/><circle cx="1146" cy="806" r="2.2" fill="#ddd"/><circle cx="1168" cy="806" r="2.2" fill="#ddd"/>
<path d="M1131 770 C1133 764 1140 762 1147 764 L1152 770 L1148 780 L1134 781Z" fill="#4a3a30"/>
<rect x="1155" y="764" width="6" height="5" fill="#c8b070"/>
<ellipse cx="1151" cy="823.5" rx="19" ry="14.5" fill="#1e2226"/>
<path d="M1147 829 l4 -5 4 5 M1151 824 v7" stroke="#ddd" stroke-width="1.2" fill="none"/>
<rect x="1180" y="800" width="14" height="45" fill="#4a4a4a"/>
<rect x="1194" y="802" width="49" height="64" fill="url(#mot)"/>
<path d="M1196 809 h45 M1196 816 h45 M1196 823 h45 M1196 830 h45 M1196 837 h45 M1196 844 h45 M1196 851 h45 M1196 858 h45" stroke="#a8a8a8" stroke-width="1"/>
<rect x="1195" y="788" width="46" height="15" fill="#1c1c1c"/>
<path d="M1242 776 H1262 C1275 779 1284 792 1286 812 C1288 835 1285 852 1270 862 C1264 865 1255 866 1242 866Z" fill="#222426"/>
<path d="M1246 789 H1266 L1278 800 V812 H1262 L1248 800Z" fill="#161616"/>
<circle cx="1246" cy="834" r="1.3" fill="#ddd"/>
<path d="M1190 787 C1192 810 1193 850 1196 872 C1199 882 1210 884 1230 884 H1296" stroke="#7a6a56" stroke-width="3.6" fill="none"/>
<path d="M1190 787 C1192 810 1193 850 1196 872 C1199 882 1210 884 1230 884 H1296" stroke="#b8a890" stroke-width="1" fill="none" stroke-dasharray="1.2 1.5"/>
<path d="M1197 799 C1212 830 1232 856 1262 864 C1275 868 1285 868 1290 862" stroke="#111" stroke-width="1.7" fill="none"/>
<path d="M1286 830 C1292 840 1290 860 1300 866 C1310 874 1322 874 1330 866" stroke="#111" stroke-width="1.6" fill="none"/>
<rect x="1294" y="879" width="22" height="8" rx="2" fill="#c0b8a0"/>
<rect x="1297" y="810" width="20" height="31" rx="2" fill="#1e1e1e"/>
<rect x="1304" y="813" width="11" height="15" fill="#cfae8c"/>
<rect x="1303.5" y="806" width="6" height="4.5" fill="#d42424"/>
<rect x="1320" y="822.5" width="10" height="11.5" rx="1" fill="#d82828"/>
<rect x="1321" y="833" width="8" height="8" fill="#1e1e1e"/>
<circle cx="1311" cy="848.3" r="8.2" fill="#f0f0f0" stroke="#2a2a2a" stroke-width="1.8"/>
<circle cx="1329.4" cy="846.4" r="7" fill="#f0f0f0" stroke="#2a2a2a" stroke-width="1.8"/>
<path d="M1333 869 C1334 850 1338 818 1342 805 C1344 797 1347 793 1352 792" stroke="#2b9cd0" stroke-width="5" fill="none"/>
<rect x="1336" y="839" width="9" height="7" fill="#c8c8c8"/>
<rect x="1350" y="786.5" width="22" height="10" rx="5" fill="#1b1b1b"/>
<path d="M1147 964 C1152 946 1198 946 1203 964Z" fill="#2a2a2a"/>
</svg>


<!-- pager -->
<div class="a" style="left:605px;top:964px;width:1118px;height:42px;background:#dcdcdc;border-top:1px solid #c9c9c9"></div>
<div class="t" style="left:1459.8px;top:977px;font-size:15px;color:#222;letter-spacing:0.45px">Strona nr</div>
<div class="a" style="left:1532px;top:971px;width:61px;height:24px;background:#fff;border:1px solid #d0d0d0;border-radius:3px"></div>
<div class="t" style="left:1583.5px;top:977px;font-size:15px;color:#222">1</div>
<div class="t" style="left:1598px;top:977px;font-size:15px;color:#222;letter-spacing:0.4px">z 105</div>
<div class="a" style="left:1643.5px;top:970.5px;width:26px;height:26px;border:2.5px solid #2b3b4a;border-radius:50%"></div>
<div class="a" style="left:1676px;top:970.5px;width:26px;height:26px;border:2.5px solid #2b3b4a;border-radius:50%"></div>
<svg class="a" style="left:1651px;top:977px" width="10" height="14" viewBox="0 0 10 14"><path d="M7.5 1.5L2.5 7 7.5 12.5" stroke="#1f6fc0" stroke-width="2" fill="none"/></svg>
<svg class="a" style="left:1685px;top:977px" width="10" height="14" viewBox="0 0 10 14"><path d="M2.5 1.5L7.5 7 2.5 12.5" stroke="#1f6fc0" stroke-width="2" fill="none"/></svg>


<!-- ============ FOOTER ============ -->
<div class="a" style="left:0;top:1006px;width:1724px;height:23px;background:#323f4d"></div>
<div class="t" style="left:11.8px;top:1011.6px;font-size:10px;color:#e4eaf0;letter-spacing:0.75px;-webkit-text-stroke:0.2px #e4eaf0">StudioSystem © SoftwareStudio Sp. z o.o. - v2021.3.264.7567</div>
<div class="t" style="left:352.3px;top:1011.6px;font-size:10px;color:#f08a3c;letter-spacing:0.1px">Licencja:</div>
<div class="t" style="left:400.5px;top:1011.6px;font-size:10px;color:#f08a3c;letter-spacing:0px;-webkit-text-stroke:0.2px #f08a3c">DEVELOPER</div>
<div class="t" style="left:1392px;top:1011.6px;font-size:10px;color:#e4eaf0;letter-spacing:0.68px;-webkit-text-stroke:0.2px #e4eaf0"><span style="color:#9aa4ae">|</span> Komórka: MAGAZYN <span style="color:#9aa4ae">|</span> Magazyn: 01 <span style="color:#9aa4ae">|</span> Oddział: CEN <span style="color:#9aa4ae">|</span> Firma: 01</div>

<!-- orange strip -->
<div class="a" style="left:0;top:80px;width:1px;height:949px;background:#5a3a18"></div>
<div class="a" style="left:1px;top:80px;width:3px;height:949px;background:#d4862a"></div>
</body></html>
